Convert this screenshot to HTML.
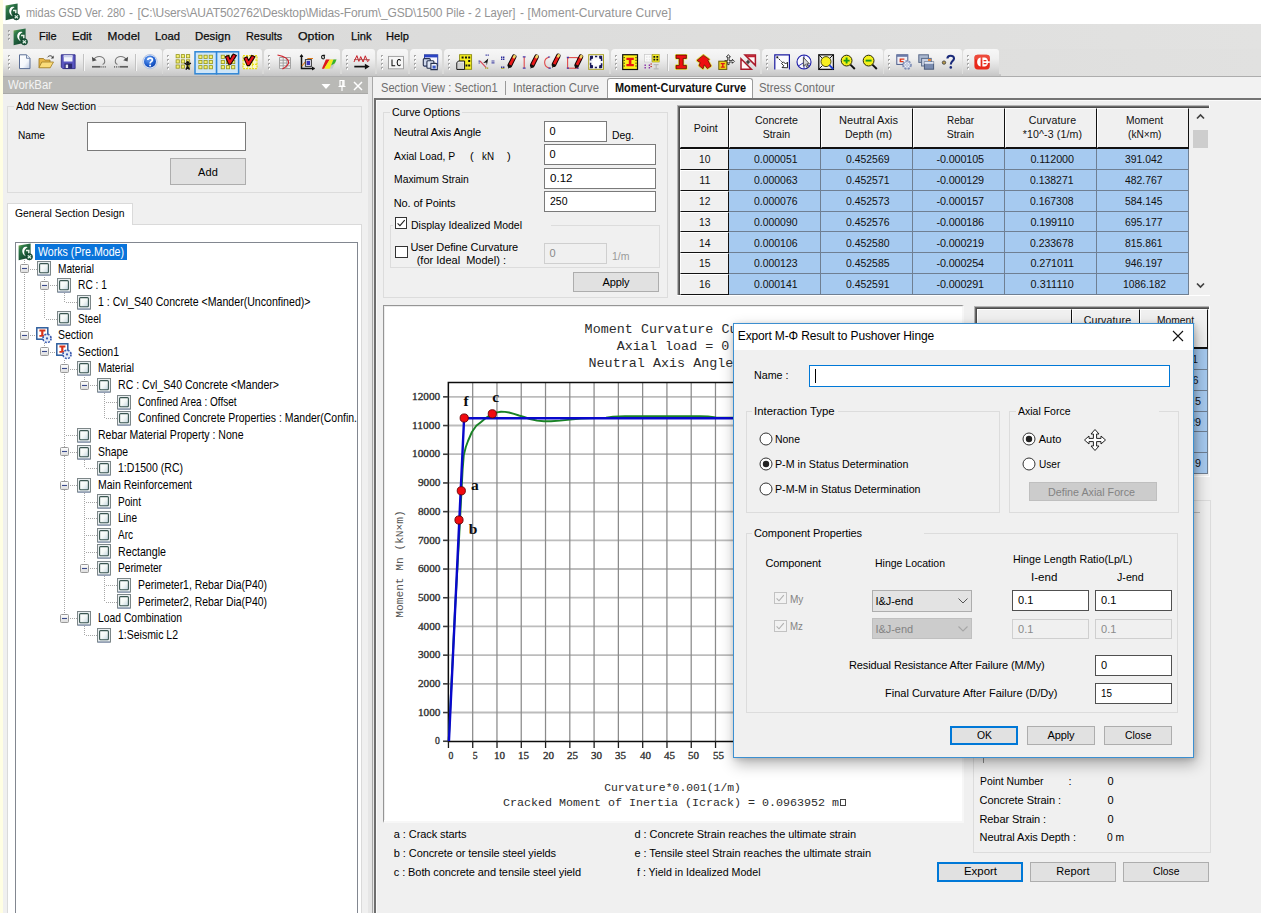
<!DOCTYPE html>
<html><head><meta charset="utf-8"><title>midas GSD</title>
<style>
html,body{margin:0;padding:0}
body{width:1261px;height:913px;overflow:hidden;background:#f0f0f0;position:relative;font-family:"Liberation Sans",sans-serif;}
div,span,svg{position:absolute;box-sizing:border-box}
span{white-space:pre;line-height:1;transform-origin:0 50%}
</style></head>
<body>
<div style="left:0px;top:0px;width:3px;height:913px;background:#fffee3;"></div>
<div style="left:3px;top:0px;width:1258px;height:24px;background:#ffffff;"></div>
<div style="left:3px;top:24px;width:1258px;height:25px;background:linear-gradient(90deg,#d9d9d8 0%,#dddddc 45%,#e2e2e1 100%);"></div>
<div style="left:3px;top:49px;width:1258px;height:28px;background:linear-gradient(90deg,#d6d6d5 0%,#dbdbda 45%,#e1e1e0 100%);"></div>
<div style="left:3px;top:74px;width:998px;height:2px;background:linear-gradient(#cbcbcb,#c2c2c2);"></div>
<div style="left:3px;top:76px;width:1258px;height:1px;background:#adadad;"></div>
<span style="left:26.20px;top:6.52px;font-size:12px;color:#949494;transform:scaleX(0.9123);">midas GSD Ver. 280</span>
<span style="left:128.90px;top:6.52px;font-size:12px;color:#949494;">-</span>
<span style="left:137.50px;top:6.52px;font-size:12px;color:#949494;letter-spacing:-0.140px;">[C:\Users\AUAT502762\Desktop\Midas-Forum\_GSD\1500</span>
<span style="left:446.00px;top:6.52px;font-size:12px;color:#949494;transform:scaleX(0.9372);">Pile - 2 Layer]</span>
<span style="left:520.00px;top:6.52px;font-size:12px;color:#949494;">-</span>
<span style="left:527.60px;top:6.52px;font-size:12px;color:#949494;letter-spacing:0.073px;">[Moment-Curvature Curve]</span>
<svg width="0" height="0" style="left:0;top:0"><defs><linearGradient id="gapp" x1="0" y1="0" x2=".7" y2="1"><stop offset="0" stop-color="#86b84e"/><stop offset=".28" stop-color="#2f7a4a"/><stop offset="1" stop-color="#0f3f2a"/></linearGradient></defs></svg>
<svg style="left:5px;top:2.6px;" width="15" height="18" viewBox="0 0 15 18"><path d="M.6 2.6 L12.6 .4 L12.6 14.6 L.6 17.2Z" fill="url(#gapp)"/>
<path d="M9.6 4.2C4.2 1.8 1.6 10.6 8 13.4C5.2 10.6 5.6 6 9.6 4.2Z" fill="#fff"/>
<path d="M8 7.4H10.8V10.4" fill="none" stroke="#e6efe6" stroke-width="1.5"/>
<circle cx="11.4" cy="13.8" r="3.1" fill="#1d5c3e" stroke="#0c3a25" stroke-width=".7"/>
<path d="M9.8 12.4L13 15.2M13 12.4L9.8 15.2" stroke="#e4f0e6" stroke-width="1.2"/></svg>
<div style="left:8px;top:30px;width:2px;height:11px;background:repeating-linear-gradient(#a2a2a2 0 2px,transparent 2px 4px)"></div><div style="left:9px;top:31px;width:1px;height:11px;background:repeating-linear-gradient(#f0f0f0 0 2px,transparent 2px 4px)"></div>
<svg style="left:13.4px;top:27.6px;" width="15" height="18" viewBox="0 0 15 18"><path d="M.6 2.6 L12.6 .4 L12.6 14.6 L.6 17.2Z" fill="url(#gapp)"/>
<path d="M9.6 4.2C4.2 1.8 1.6 10.6 8 13.4C5.2 10.6 5.6 6 9.6 4.2Z" fill="#fff"/>
<path d="M8 7.4H10.8V10.4" fill="none" stroke="#e6efe6" stroke-width="1.5"/>
<circle cx="11.4" cy="13.8" r="3.1" fill="#1d5c3e" stroke="#0c3a25" stroke-width=".7"/>
<path d="M9.8 12.4L13 15.2M13 12.4L9.8 15.2" stroke="#e4f0e6" stroke-width="1.2"/></svg>
<span style="left:39.20px;top:31.22px;font-size:11.8px;color:#111;transform:scaleX(0.9256);-webkit-text-stroke:0.25px #000;">File</span>
<span style="left:72.20px;top:31.22px;font-size:11.8px;color:#111;transform:scaleX(0.9740);-webkit-text-stroke:0.25px #000;">Edit</span>
<span style="left:107.50px;top:31.22px;font-size:11.8px;color:#111;letter-spacing:0.072px;-webkit-text-stroke:0.25px #000;">Model</span>
<span style="left:155.00px;top:31.22px;font-size:11.8px;color:#111;transform:scaleX(0.9524);-webkit-text-stroke:0.25px #000;">Load</span>
<span style="left:195.30px;top:31.22px;font-size:11.8px;color:#111;transform:scaleX(0.9664);-webkit-text-stroke:0.25px #000;">Design</span>
<span style="left:246.30px;top:31.22px;font-size:11.8px;color:#111;transform:scaleX(0.9201);-webkit-text-stroke:0.25px #000;">Results</span>
<span style="left:298.30px;top:31.22px;font-size:11.8px;color:#111;transform:scaleX(1.0470);-webkit-text-stroke:0.25px #000;">Option</span>
<span style="left:350.50px;top:31.22px;font-size:11.8px;color:#111;transform:scaleX(0.9466);-webkit-text-stroke:0.25px #000;">Link</span>
<span style="left:386.40px;top:31.22px;font-size:11.8px;color:#111;transform:scaleX(0.9437);-webkit-text-stroke:0.25px #000;">Help</span>
<div style="left:3px;top:49px;width:159px;height:27px;background:linear-gradient(#f7f7f7 0%,#f0f0f0 35%,#dadada 72%,#c6c6c6 100%);border-radius:0 3px 0 0;"></div>
<div style="left:8px;top:55px;width:2px;height:15px;background:repeating-linear-gradient(#a9a9a9 0 2px,transparent 2px 4px)"></div>
<div style="left:9px;top:56px;width:1px;height:15px;background:repeating-linear-gradient(#fff 0 2px,transparent 2px 4px)"></div>
<div style="left:163px;top:49px;width:99px;height:27px;background:linear-gradient(#f7f7f7 0%,#f0f0f0 35%,#dadada 72%,#c6c6c6 100%);border-radius:4px 3px 0 0;"></div>
<div style="left:167px;top:55px;width:2px;height:15px;background:repeating-linear-gradient(#a9a9a9 0 2px,transparent 2px 4px)"></div>
<div style="left:168px;top:56px;width:1px;height:15px;background:repeating-linear-gradient(#fff 0 2px,transparent 2px 4px)"></div>
<div style="left:264px;top:49px;width:76px;height:27px;background:linear-gradient(#f7f7f7 0%,#f0f0f0 35%,#dadada 72%,#c6c6c6 100%);border-radius:4px 3px 0 0;"></div>
<div style="left:268px;top:55px;width:2px;height:15px;background:repeating-linear-gradient(#a9a9a9 0 2px,transparent 2px 4px)"></div>
<div style="left:269px;top:56px;width:1px;height:15px;background:repeating-linear-gradient(#fff 0 2px,transparent 2px 4px)"></div>
<div style="left:342px;top:49px;width:33px;height:27px;background:linear-gradient(#f7f7f7 0%,#f0f0f0 35%,#dadada 72%,#c6c6c6 100%);border-radius:4px 3px 0 0;"></div>
<div style="left:346px;top:55px;width:2px;height:15px;background:repeating-linear-gradient(#a9a9a9 0 2px,transparent 2px 4px)"></div>
<div style="left:347px;top:56px;width:1px;height:15px;background:repeating-linear-gradient(#fff 0 2px,transparent 2px 4px)"></div>
<div style="left:377px;top:49px;width:31px;height:27px;background:linear-gradient(#f7f7f7 0%,#f0f0f0 35%,#dadada 72%,#c6c6c6 100%);border-radius:4px 3px 0 0;"></div>
<div style="left:381px;top:55px;width:2px;height:15px;background:repeating-linear-gradient(#a9a9a9 0 2px,transparent 2px 4px)"></div>
<div style="left:382px;top:56px;width:1px;height:15px;background:repeating-linear-gradient(#fff 0 2px,transparent 2px 4px)"></div>
<div style="left:410px;top:49px;width:32px;height:27px;background:linear-gradient(#f7f7f7 0%,#f0f0f0 35%,#dadada 72%,#c6c6c6 100%);border-radius:4px 3px 0 0;"></div>
<div style="left:414px;top:55px;width:2px;height:15px;background:repeating-linear-gradient(#a9a9a9 0 2px,transparent 2px 4px)"></div>
<div style="left:415px;top:56px;width:1px;height:15px;background:repeating-linear-gradient(#fff 0 2px,transparent 2px 4px)"></div>
<div style="left:444px;top:49px;width:165px;height:27px;background:linear-gradient(#f7f7f7 0%,#f0f0f0 35%,#dadada 72%,#c6c6c6 100%);border-radius:4px 3px 0 0;"></div>
<div style="left:448px;top:55px;width:2px;height:15px;background:repeating-linear-gradient(#a9a9a9 0 2px,transparent 2px 4px)"></div>
<div style="left:449px;top:56px;width:1px;height:15px;background:repeating-linear-gradient(#fff 0 2px,transparent 2px 4px)"></div>
<div style="left:611px;top:49px;width:149px;height:27px;background:linear-gradient(#f7f7f7 0%,#f0f0f0 35%,#dadada 72%,#c6c6c6 100%);border-radius:4px 3px 0 0;"></div>
<div style="left:615px;top:55px;width:2px;height:15px;background:repeating-linear-gradient(#a9a9a9 0 2px,transparent 2px 4px)"></div>
<div style="left:616px;top:56px;width:1px;height:15px;background:repeating-linear-gradient(#fff 0 2px,transparent 2px 4px)"></div>
<div style="left:762px;top:49px;width:121px;height:27px;background:linear-gradient(#f7f7f7 0%,#f0f0f0 35%,#dadada 72%,#c6c6c6 100%);border-radius:4px 3px 0 0;"></div>
<div style="left:766px;top:55px;width:2px;height:15px;background:repeating-linear-gradient(#a9a9a9 0 2px,transparent 2px 4px)"></div>
<div style="left:767px;top:56px;width:1px;height:15px;background:repeating-linear-gradient(#fff 0 2px,transparent 2px 4px)"></div>
<div style="left:884px;top:49px;width:78px;height:27px;background:linear-gradient(#f7f7f7 0%,#f0f0f0 35%,#dadada 72%,#c6c6c6 100%);border-radius:4px 3px 0 0;"></div>
<div style="left:888px;top:55px;width:2px;height:15px;background:repeating-linear-gradient(#a9a9a9 0 2px,transparent 2px 4px)"></div>
<div style="left:889px;top:56px;width:1px;height:15px;background:repeating-linear-gradient(#fff 0 2px,transparent 2px 4px)"></div>
<div style="left:963px;top:49px;width:36px;height:27px;background:linear-gradient(#f7f7f7 0%,#f0f0f0 35%,#dadada 72%,#c6c6c6 100%);border-radius:4px 3px 0 0;"></div>
<div style="left:967px;top:55px;width:2px;height:15px;background:repeating-linear-gradient(#a9a9a9 0 2px,transparent 2px 4px)"></div>
<div style="left:968px;top:56px;width:1px;height:15px;background:repeating-linear-gradient(#fff 0 2px,transparent 2px 4px)"></div>
<div style="left:83px;top:54px;width:1px;height:17px;background:#c2c2c2;"></div>
<div style="left:84px;top:54px;width:1px;height:17px;background:#f6f6f6;"></div>
<div style="left:135px;top:54px;width:1px;height:17px;background:#c2c2c2;"></div>
<div style="left:136px;top:54px;width:1px;height:17px;background:#f6f6f6;"></div>
<div style="left:667px;top:54px;width:1px;height:17px;background:#c2c2c2;"></div>
<div style="left:668px;top:54px;width:1px;height:17px;background:#f6f6f6;"></div>
<svg style="left:193px;top:50px;" width="48" height="26" viewBox="0 0 48 26"><rect x="2" y="1.8" width="21.6" height="22" fill="#cfe6f8" stroke="#2f86d6" stroke-width="1.5"/><rect x="23.6" y="1.8" width="22" height="22" fill="#cfe6f8" stroke="#2f86d6" stroke-width="1.5"/></svg>
<div style="left:3px;top:77px;width:365px;height:17px;background:#b9b9b6;"></div>
<div style="left:3px;top:93px;width:365px;height:1px;background:#a9a9a7;"></div>
<span style="left:8.00px;top:79.38px;font-size:12.5px;color:#f4f4f4;transform:scaleX(0.9093);">WorkBar</span>
<svg style="left:320px;top:80px;" width="12" height="12" viewBox="0 0 12 12"><path d="M1.5 4 H10.5 L6 9Z" fill="#fff"/></svg>
<svg style="left:336px;top:79px;" width="12" height="13" viewBox="0 0 12 13"><path d="M4 1.5H8V7H4Z M2.5 7.5H9.5 M6 7.5V12" fill="none" stroke="#fff" stroke-width="1.2"/><path d="M7 1.5V7" stroke="#fff" stroke-width="1.6"/></svg>
<svg style="left:352px;top:80px;" width="12" height="12" viewBox="0 0 12 12"><path d="M2 2L10 10M10 2L2 10" stroke="#fff" stroke-width="1.5"/></svg>
<div style="left:368px;top:77px;width:5px;height:836px;background:#e6e6e6;"></div>
<svg style="left:0;top:0" width="1000" height="78" viewBox="0 0 1000 78"><g transform="translate(17,54)"><defs><linearGradient id="gn" x1="0" y1="0" x2="1" y2="1"><stop offset="0" stop-color="#fff"/><stop offset=".6" stop-color="#f4f7fc"/><stop offset="1" stop-color="#b9c6de"/></linearGradient></defs>
<path d="M2.5 .8H9.5L13 4.3V14.6H2.5Z" fill="url(#gn)" stroke="#5a6e96" stroke-width="1"/><path d="M9.5 .8V4.3H13" fill="#e8eef8" stroke="#5a6e96" stroke-width=".8"/></g><g transform="translate(38,54)"><path d="M1 4.5H5.5L6.8 6H12V13.5H1Z" fill="#e9b84a" stroke="#9a7420" stroke-width=".8"/>
<path d="M3.8 8H15.5L12.2 13.8H.9Z" fill="#fbdc7a" stroke="#a07c24" stroke-width=".8"/>
<path d="M9.5 3.3C11 1.2 13.6 1.3 14.8 3.4" fill="none" stroke="#3d3d3d" stroke-width="1"/><path d="M15.6 1.6V4.6H12.8Z" fill="#3d3d3d"/></g><g transform="translate(60.5,54)"><path d="M.8 .8H14.6V14.6H2.3L.8 13.1Z" fill="#5a56c0" stroke="#2e2a86" stroke-width=".9"/>
<rect x="3.2" y="1.3" width="8.8" height="6.2" fill="#f2f4fb"/><rect x="3.2" y="1.3" width="8.8" height="2" fill="#c9cfea"/>
<rect x="4" y="9.6" width="7.6" height="5" fill="#2a2870"/><rect x="5.2" y="10.6" width="2.4" height="3.4" fill="#e6e8f4"/></g><g transform="translate(91,54)"><path d="M2.6 5.8C5 1.2 11.8 1.4 13.4 5.6C14.4 8.6 12.6 10 11.6 10.4" fill="none" stroke="#787878" stroke-width="1.05"/>
<path d="M.9 2.8L1.4 7.6L5.8 6.2Z" fill="#4f4f4f"/><path d="M1 12.8H9.5" stroke="#5f5f5f" stroke-width="1.7"/><path d="M10.4 12.8H15" stroke="#777" stroke-width="1.7" stroke-dasharray="1 .9"/></g><g transform="translate(113,54)"><path d="M13.4 5.8C11 1.2 4.2 1.4 2.6 5.6C1.6 8.6 3.4 10 4.4 10.4" fill="none" stroke="#787878" stroke-width="1.05"/>
<path d="M15.1 2.8L14.6 7.6L10.2 6.2Z" fill="#4f4f4f"/><path d="M6.5 12.8H15" stroke="#5f5f5f" stroke-width="1.7"/><path d="M1 12.8H5.6" stroke="#777" stroke-width="1.7" stroke-dasharray="1 .9"/></g><g transform="translate(142,54)"><defs><radialGradient id="gh" cx=".4" cy=".3" r=".8"><stop offset="0" stop-color="#6fa4f2"/><stop offset=".6" stop-color="#1f5fd0"/><stop offset="1" stop-color="#0c3a9c"/></radialGradient></defs>
<circle cx="8" cy="7.6" r="7.2" fill="#dfe8f8" stroke="#9ab0d8" stroke-width=".6"/><circle cx="8" cy="7.6" r="6" fill="url(#gh)"/>
<path d="M5.8 6C5.8 3.4 10.4 3.4 10.4 6C10.4 7.6 8.1 7.6 8.1 9.4" fill="none" stroke="#fff" stroke-width="1.7"/><circle cx="8.1" cy="11.6" r="1" fill="#fff"/></g><g transform="translate(175.5,54)"><rect x="0.6" y="0.6" width="3.2" height="3.2" fill="#f5f070" stroke="#96961c" stroke-width=".8"/><rect x="5.8" y="0.6" width="3.2" height="3.2" fill="#f5f070" stroke="#96961c" stroke-width=".8"/><rect x="11.0" y="0.6" width="3.2" height="3.2" fill="#f5f070" stroke="#96961c" stroke-width=".8"/><rect x="0.6" y="5.8" width="3.2" height="3.2" fill="#f5f070" stroke="#96961c" stroke-width=".8"/><rect x="5.8" y="5.8" width="3.2" height="3.2" fill="#f5f070" stroke="#96961c" stroke-width=".8"/><rect x="11.0" y="5.8" width="3.2" height="3.2" fill="#f5f070" stroke="#96961c" stroke-width=".8"/><rect x="0.6" y="11.0" width="3.2" height="3.2" fill="#f5f070" stroke="#96961c" stroke-width=".8"/><rect x="5.8" y="11.0" width="3.2" height="3.2" fill="#f5f070" stroke="#96961c" stroke-width=".8"/><rect x="11.0" y="11.0" width="3.2" height="3.2" fill="#f5f070" stroke="#96961c" stroke-width=".8"/><circle cx="12.2" cy="8.6" r="1.5" fill="#111"/><path d="M9 9.2L12.2 11L15.4 9.2M12.2 10.4V13M10.4 15.6L12.2 12.6L14 15.6" fill="none" stroke="#111" stroke-width="1.5"/></g><g transform="translate(198.2,54.6)"><rect x="0.6" y="0.6" width="3.2" height="3.2" fill="#f5f070" stroke="#96961c" stroke-width=".8"/><rect x="5.8" y="0.6" width="3.2" height="3.2" fill="#f5f070" stroke="#96961c" stroke-width=".8"/><rect x="11.0" y="0.6" width="3.2" height="3.2" fill="#f5f070" stroke="#96961c" stroke-width=".8"/><rect x="0.6" y="5.8" width="3.2" height="3.2" fill="#f5f070" stroke="#96961c" stroke-width=".8"/><rect x="5.8" y="5.8" width="3.2" height="3.2" fill="#f5f070" stroke="#96961c" stroke-width=".8"/><rect x="11.0" y="5.8" width="3.2" height="3.2" fill="#f5f070" stroke="#96961c" stroke-width=".8"/><rect x="0.6" y="11.0" width="3.2" height="3.2" fill="#f5f070" stroke="#96961c" stroke-width=".8"/><rect x="5.8" y="11.0" width="3.2" height="3.2" fill="#f5f070" stroke="#96961c" stroke-width=".8"/><rect x="11.0" y="11.0" width="3.2" height="3.2" fill="#f5f070" stroke="#96961c" stroke-width=".8"/></g><g transform="translate(220.6,54.6)"><rect x="0.6" y="0.6" width="3.2" height="3.2" fill="#f5f070" stroke="#96961c" stroke-width=".8"/><rect x="5.8" y="0.6" width="3.2" height="3.2" fill="#f5f070" stroke="#96961c" stroke-width=".8"/><rect x="11.0" y="0.6" width="3.2" height="3.2" fill="#f5f070" stroke="#96961c" stroke-width=".8"/><rect x="0.6" y="5.8" width="3.2" height="3.2" fill="#f5f070" stroke="#96961c" stroke-width=".8"/><rect x="5.8" y="5.8" width="3.2" height="3.2" fill="#f5f070" stroke="#96961c" stroke-width=".8"/><rect x="11.0" y="5.8" width="3.2" height="3.2" fill="#f5f070" stroke="#96961c" stroke-width=".8"/><rect x="0.6" y="11.0" width="3.2" height="3.2" fill="#f5f070" stroke="#96961c" stroke-width=".8"/><rect x="5.8" y="11.0" width="3.2" height="3.2" fill="#f5f070" stroke="#96961c" stroke-width=".8"/><rect x="11.0" y="11.0" width="3.2" height="3.2" fill="#f5f070" stroke="#96961c" stroke-width=".8"/><g transform="translate(0,-1.4)"><path d="M4.8 3.6L7.8 2.2L9.4 6L12.6 .8L15.8 2.2L10.2 11L8 11Z" fill="#e8141c" stroke="#1a0000" stroke-width="1.1" stroke-linejoin="round"/></g></g><g transform="translate(242,54)"><rect x="1" y="1.6" width="14" height="13" fill="#fbf8c8" stroke="#e4dc18" stroke-width="1.2" stroke-dasharray="2 1"/>
<path d="M1 6H15M1 10.4H15M5.6 1.6V14.6M10.4 1.6V14.6" stroke="#e8df18" stroke-width="1.1" stroke-dasharray="2 1"/><g transform="translate(-2.8,.6)"><path d="M4.8 3.6L7.8 2.2L9.4 6L12.6 .8L15.8 2.2L10.2 11L8 11Z" fill="#e8141c" stroke="#1a0000" stroke-width="1.1" stroke-linejoin="round"/></g></g><g transform="translate(276,54)"><path d="M3.5 3.5H14.5V14.5H3.5ZM3.5 6.2H14.5M3.5 9H14.5M3.5 11.8H14.5M7.2 3.5V14.5M10.8 3.5V14.5" fill="#f1f1f1" stroke="#9c9c9c" stroke-width=".9"/>
<path d="M1.5 1C7 2 12.4 4.6 12.6 8.4C12.6 11 9 13.4 6.4 15" fill="none" stroke="#d0202a" stroke-width="1.1"/></g><g transform="translate(299,54)"><path d="M2.5 1V14.5H15.5" fill="none" stroke="#111" stroke-width="1.5"/><path d="M2.5 0L.6 3H4.4Z M16 14.5L13 12.6V16.4Z" fill="#111"/>
<path d="M3 12L9 4.5H14" fill="none" stroke="#e07a18" stroke-width="1.1"/><rect x="6.4" y="5.6" width="6" height="6.8" fill="#e4e4f4" stroke="#3a3a3a" stroke-width="1"/><rect x="7.6" y="7" width="3.4" height="4" fill="#3a34b8"/></g><g transform="translate(320.5,54)"><path d="M5.4 5.4H16L12 14.8H1.4Z" fill="#c8c8c8"/><path d="M5.4 5.4H9.2L3.6 14.8H1.4Z" fill="#e01818"/><path d="M9.2 5.4H13L9.2 14.8H3.6Z" fill="#f4ec1c"/><path d="M13 5.4H16L14.4 9.2L10.6 11.6Z" fill="#38b428"/>
<path d="M4.6 1.2H2.6C.6 1.2 .6 5 2.6 5C4.4 5 4.4 1.6 2.6 1.4" fill="none" stroke="#111" stroke-width="1.1"/></g><g transform="translate(353.5,54)"><path d="M.5 8L3.4 1.6L5.4 7.4L7.2 2.6L9.6 8L11.8 1.8L14 7.6L16 6" fill="none" stroke="#c81e28" stroke-width="1"/><path d="M.5 5.6H16" stroke="#b04848" stroke-width=".9"/>
<path d="M.8 12.6H12" stroke="#111" stroke-width="1.7"/><path d="M16.2 12.6L11.4 9.8V15.4Z" fill="#111"/></g><g transform="translate(388,54)"><rect x=".5" y="2.4" width="15" height="12.4" fill="#f6f6f6" stroke="#9a9a9a" stroke-width=".9"/>
<path d="M4 5.4V11.8H7.2M12.6 6.6C11.8 4.8 9.2 5 9.2 8.6C9.2 12.2 11.8 12.4 12.6 10.6" fill="none" stroke="#111" stroke-width="1.05"/></g><g transform="translate(422.5,54)"><rect x="2" y=".8" width="13.2" height="11.2" fill="#f8f8ff" stroke="#2a3c9a" stroke-width="1"/><rect x="2" y=".8" width="13.2" height="2.6" fill="#2c44c4"/>
<rect x=".8" y="4.6" width="7" height="7.4" rx="1" fill="#cfd8ec" stroke="#26304e" stroke-width="1.1"/>
<rect x="4.4" y="6.8" width="7" height="7.4" rx="1" fill="#dfe6f4" stroke="#26304e" stroke-width="1.1"/>
<path d="M8.4 9.4H13.4C14.6 9.4 14.8 10.2 14.8 11V15.6H8.4Z" fill="#eef2fa" stroke="#26304e" stroke-width="1.1"/><rect x="10" y="11.6" width="3.2" height="3" fill="#3a58c8"/></g><g transform="translate(456,54)"><rect x="3.6" y=".7" width="12" height="14.6" fill="#f6ee20" stroke="#8a8a10" stroke-width=".9"/>
<path d="M5.6 2.6H7.6V4.6H5.6ZM9 2.6H11V4.6H9ZM12.2 2.6H14.2V4.6H12.2ZM12.2 6H14.2V8H12.2ZM12.2 10.6H14.2V12.6H12.2ZM9.6 10.6H11.4V12.6H9.6Z" fill="#111"/>
<path d="M.8 8.8L2.4 7H8.6V15.4H.8Z" fill="#e6e6e6" stroke="#111" stroke-width="1"/><path d="M2 10H7.4M2 12H7.4M2 14H7.4" stroke="#a8a8a8" stroke-width=".7"/></g><g transform="translate(478,54)"><path d="M2 7L8.2 13.6" stroke="#d84a5a" stroke-width="1.1"/><path d="M10.2 4.4L5.2 9L8.4 8.6L8.8 11.6Z" fill="#111"/>
<path d="M7.6 .6H8.8V1.8H7.6ZM9.6 .6H10.8V1.8H9.6ZM.6 6.6H1.8V7.8H.6ZM.6 8.4H1.8V9.6H.6ZM13.6 6.4H14.8V7.6H13.6ZM15.2 6.4H16.4V7.6H15.2ZM13.6 8.2H14.8V9.4H13.6ZM15.2 8.2H16.4V9.4H15.2Z" fill="#2a2a9a"/>
<path d="M7.2 13.6H8.4V14.8H7.2ZM9 13.6H10.2V14.8H9Z" fill="#a8a010"/></g><g transform="translate(500,54)"><path d="M1 2.6H2.4V4H1ZM3 2.6H4.4V4H3ZM1 4.6H2.4V6H1ZM3 4.6H4.4V6H3ZM1 12.6H2.4V14H1ZM3 12.6H4.4V14H3Z" fill="#2a2a9a"/><path d="M1 14.4H4.4" stroke="#a8a010" stroke-width=".8"/><g transform="translate(3,0)"><g transform="translate(.9,1.3) scale(.9)"><path d="M11.4 1.6L6.6 11.2" stroke="#140000" stroke-width="5.2" stroke-linecap="round"/><path d="M4.6 15L5.2 9.6L9 11.6Z" fill="#111"/><path d="M11.2 2L6.9 10.6" stroke="#e81a1a" stroke-width="3.1" stroke-linecap="butt"/><path d="M11.9 .9L11.3 2.1" stroke="#f2d468" stroke-width="3" stroke-linecap="round"/></g></g></g><g transform="translate(522,54)"><path d="M2.2 3V14" stroke="#e04a4a" stroke-width="1.1"/><path d="M.8 2.2H3.6V3.4H.8ZM.8 13.6H3.6V14.8H.8Z" fill="#4a3aa8"/><g transform="translate(3.4,0)"><g transform="translate(.9,1.3) scale(.9)"><path d="M11.4 1.6L6.6 11.2" stroke="#140000" stroke-width="5.2" stroke-linecap="round"/><path d="M4.6 15L5.2 9.6L9 11.6Z" fill="#111"/><path d="M11.2 2L6.9 10.6" stroke="#e81a1a" stroke-width="3.1" stroke-linecap="butt"/><path d="M11.9 .9L11.3 2.1" stroke="#f2d468" stroke-width="3" stroke-linecap="round"/></g></g></g><g transform="translate(543.5,54)"><path d="M5.6 3.2C-.6 4.6 -.4 13 6.4 14.2" fill="none" stroke="#e04a4a" stroke-width="1.1"/><path d="M4.4 2.4H6.6V3.6H4.4ZM5 13.6H7.4V14.8H5Z" fill="#4a3aa8"/><g transform="translate(3.6,-.8)"><g transform="translate(.9,1.3) scale(.9)"><path d="M11.4 1.6L6.6 11.2" stroke="#140000" stroke-width="5.2" stroke-linecap="round"/><path d="M4.6 15L5.2 9.6L9 11.6Z" fill="#111"/><path d="M11.2 2L6.9 10.6" stroke="#e81a1a" stroke-width="3.1" stroke-linecap="butt"/><path d="M11.9 .9L11.3 2.1" stroke="#f2d468" stroke-width="3" stroke-linecap="round"/></g></g></g><g transform="translate(566,54)"><rect x="1.6" y="3.6" width="10" height="10.6" fill="none" stroke="#e04a4a" stroke-width="1.1"/><path d="M.8 2.8H3V4.2H.8ZM.8 13.4H3V14.8H.8ZM10.6 13.4H12.8V14.8H10.6Z" fill="#4a3aa8"/><g transform="translate(3.8,0)"><g transform="translate(.9,1.3) scale(.9)"><path d="M11.4 1.6L6.6 11.2" stroke="#140000" stroke-width="5.2" stroke-linecap="round"/><path d="M4.6 15L5.2 9.6L9 11.6Z" fill="#111"/><path d="M11.2 2L6.9 10.6" stroke="#e81a1a" stroke-width="3.1" stroke-linecap="butt"/><path d="M11.9 .9L11.3 2.1" stroke="#f2d468" stroke-width="3" stroke-linecap="round"/></g></g></g><g transform="translate(588,54)"><rect x=".7" y=".7" width="14.8" height="14.6" fill="#f4f4fa" stroke="#a8a020" stroke-width="1"/>
<rect x="2.6" y="2.6" width="11" height="10.8" fill="none" stroke="#1a1a5a" stroke-width="1.5" stroke-dasharray="2.2 2.2"/><rect x="2" y="2" width="3" height="3" fill="#1a1a5a"/><rect x="11.2" y="2" width="3" height="3" fill="#1a1a5a"/><rect x="2" y="11" width="3" height="3" fill="#1a1a5a"/><rect x="11.2" y="11" width="3" height="3" fill="#1a1a5a"/>
<rect x="4.6" y="4.4" width="7" height="7" fill="#fff"/></g><g transform="translate(622,54)"><rect x=".7" y=".7" width="14.8" height="14.8" fill="#faf21a" stroke="#111" stroke-width="1.2"/>
<path d="M4.4 3.8H11.8V6H9.4V10H11.8V12.2H4.4V10H6.8V6H4.4Z" fill="#e81414"/>
<path d="M2.2 3V13.4M14 3V13.4" stroke="#111" stroke-width=".9" stroke-dasharray="1.2 1.6"/></g><g transform="translate(644,54)"><rect x=".6" y=".6" width="7" height="7.4" fill="#fafafa" stroke="#c8c8c8" stroke-width=".7"/><rect x="8.2" y=".6" width="7" height="7.4" fill="#f6ee20" stroke="#a8a020" stroke-width=".7"/>
<path d="M2 2.2H3.6V3.8H2ZM4.8 2.2H6.4V3.8H4.8ZM2 5H3.6V6.6H2ZM4.8 5H6.4V6.6H4.8Z" fill="#e8e8e8"/><path d="M9.4 2H11.2V3.8H9.4ZM12.4 2H14.2V3.8H12.4ZM9.4 4.8H11.2V6.6H9.4ZM12.4 4.8H14.2V6.6H12.4Z" fill="#111"/>
<path d="M1.2 10.4V15M5.4 10.4V15" stroke="#8a30a8" stroke-width="1.4" stroke-dasharray="1.6 1"/><path d="M6.4 10H8M6.4 12.6H8" stroke="#c03030" stroke-width="1"/><path d="M9.6 10.6H14.6M12.2 10.6V14.6M9.6 14.8H14.6" stroke="#b8b8b8" stroke-width="1.2"/></g><g transform="translate(674,54)"><path d="M2 1H12.4V4.4H9.2V11.4H12.4V14.8H2V11.4H5.2V4.4H2Z" fill="#ee1010" stroke="#f4ea50" stroke-width="2.2" stroke-linejoin="round"/><path d="M2 1H12.4V4.4H9.2V11.4H12.4V14.8H2V11.4H5.2V4.4H2Z" fill="#ee1010" stroke="#3a0000" stroke-width=".7"/></g><g transform="translate(696,54)"><path d="M7.4 1.2L13.2 5.4L12 6.6L15 12L11.4 14.6L8.4 10.8L7 14.8L3 11.6L4.2 8.6L1 6.4Z" fill="#ee1010" stroke="#ecd84a" stroke-width="2.4" stroke-linejoin="round"/><path d="M7.4 1.2L13.2 5.4L12 6.6L15 12L11.4 14.6L8.4 10.8L7 14.8L3 11.6L4.2 8.6L1 6.4Z" fill="#ee1010" stroke="#4a0a00" stroke-width=".7" stroke-linejoin="round"/></g><g transform="translate(718,54)"><path d="M10.4 .6L12.4 3H11.1V6.6H14.4V5.3L16.4 7.3L14.4 9.3V8H11.1V10.6H9.7V8H6.8V6.6H9.7V3H8.4Z" fill="#fff" stroke="#111" stroke-width=".8" stroke-linejoin="round"/>
<rect x=".8" y="7.2" width="8" height="8.2" fill="#f0d418" stroke="#6a5a08" stroke-width="1"/><path d="M2.8 9H6.8V10.3H5.5V12.4H6.8V13.7H2.8V12.4H4.1V10.3H2.8Z" fill="#d81a1a"/></g><g transform="translate(740,54)"><path d="M5 1H15.4V11.4Z" fill="#fff6f6" stroke="#a81828" stroke-width="1.5" stroke-linejoin="miter"/><path d="M5.6 1.2H15.2V3.2H8Z" fill="#c02030"/><path d="M1 4.8V15.2H11.4Z" fill="#fff6f6" stroke="#a81828" stroke-width="1.5"/>
<path d="M5.8 8H10.2M8 5.8V10.2" stroke="#111" stroke-width="1.1"/></g><g transform="translate(774,54)"><path d="M.8 15.4V.8H15.4V15.4" fill="#fbfbff" stroke="#1a1aa0" stroke-width="1.2"/>
<path d="M3.2 3.2L9 9" stroke="#111" stroke-width="1" stroke-dasharray="1.4 1"/><path d="M13.6 13.8L13.4 8.2L11.6 10L9.4 7.8L7.6 9.6L9.8 11.8L8 13.6Z" fill="#fff" stroke="#111" stroke-width=".9"/><rect x="2.4" y="2.4" width="1.8" height="1.8" fill="#111"/></g><g transform="translate(796,54)"><circle cx="8" cy="8" r="7" fill="#fafaff" stroke="#1c1ca8" stroke-width="1.1"/><path d="M8 1V15M2.4 12L8 8.4L13.6 12" fill="none" stroke="#1c1ca8" stroke-width=".9"/>
<path d="M7.4 3.4V12.2L9.4 10.4L11 13.8L12.4 13.2L10.8 9.8H13.4Z" fill="#d8d8d8" stroke="#333" stroke-width=".8"/></g><g transform="translate(818,54)"><rect x=".8" y=".8" width="14.6" height="14.6" fill="#f4f4f4" stroke="#111" stroke-width="1.3"/><path d="M1 1L5 5M15 1L11.4 4.6M1 15L4.6 11.4" stroke="#111" stroke-width="1"/>
<circle cx="8" cy="7.6" r="5" fill="#f8f020" stroke="#3a3a10" stroke-width=".9"/><path d="M11.4 11.2L15.2 15.2" stroke="#1a3ad0" stroke-width="1.8"/></g><g transform="translate(840,54)"><circle cx="6.6" cy="6.6" r="5.4" fill="#f4f01a" stroke="#2a2a08" stroke-width="1"/><path d="M10.4 10.6L14.8 15" stroke="#111" stroke-width="1.9"/><path d="M3.6 6.6H9.6M6.6 3.6V9.6" stroke="#1a9a1a" stroke-width="1.9"/></g><g transform="translate(862,54)"><circle cx="6.6" cy="6.6" r="5.4" fill="#f4f01a" stroke="#2a2a08" stroke-width="1"/><path d="M10.4 10.6L14.8 15" stroke="#111" stroke-width="1.9"/><path d="M3.6 6.6H9.6" stroke="#1a9a1a" stroke-width="1.9"/></g><g transform="translate(896,54)"><rect x=".8" y=".8" width="11" height="9.6" fill="#eef0f8" stroke="#4a5a8a" stroke-width="1"/><rect x=".8" y=".8" width="11" height="2" fill="#6a7aa8"/><path d="M3.6 4.4H8.4V5.8H5.2V7H7.6V8.2H3.6Z" fill="#e03a1a"/>
<circle cx="11" cy="11" r="3.7" fill="#dde4f2" stroke="#7a8ab4" stroke-width="2.2" stroke-dasharray="1.9 1.2"/><circle cx="11" cy="11" r="3.2" fill="#eef2fa" stroke="#8a9abf" stroke-width=".7"/><circle cx="11" cy="11" r="1.3" fill="#fff" stroke="#7a8ab4" stroke-width=".6"/></g><g transform="translate(918,54)"><rect x=".8" y=".8" width="9.6" height="7.6" fill="#aab8d0" stroke="#5a6a88" stroke-width="1"/><rect x="3.6" y="4.4" width="9.6" height="7.6" fill="#c8d2e4" stroke="#5a6a88" stroke-width="1"/><rect x="10" y="5" width="3" height="2" fill="#e88a3a"/>
<rect x="6.4" y="8" width="9.2" height="7.2" fill="#7a8cb0" stroke="#4a5a7a" stroke-width="1"/><rect x="6.4" y="8" width="9.2" height="1.8" fill="#dfe6f2"/></g><g transform="translate(941,54)"><path d="M6.4 4.6C6.4 .8 13 .8 13 4.4C13 7 9.8 7.2 9.8 10.4" fill="none" stroke="#1a2a7a" stroke-width="2.1"/><circle cx="9.8" cy="13.4" r="1.3" fill="#1a2a7a"/><circle cx="3" cy="8.6" r="1.7" fill="#b89a4a" stroke="#3a3a3a" stroke-width=".8"/></g><g transform="translate(974,54)"><rect x=".4" y=".8" width="15.4" height="14.6" rx="3.4" fill="#e8281a"/><rect x=".4" y=".8" width="15.4" height="5" rx="3" fill="#f0584a" opacity=".7"/>
<path d="M6.6 3.6C2 3.6 2 12.6 6.6 12.6Z" fill="#fff"/><path d="M8.4 3.6H11C15 3.6 15 12.6 11 12.6H8.4Z" fill="#fff"/><path d="M9.6 6.6H12.4M9.6 9.6H12.4" stroke="#e8281a" stroke-width="1.2"/><path d="M12.4 8.1H15.8" stroke="#fff" stroke-width="1.6"/></g></svg>
<div style="left:7px;top:106px;width:355px;height:87px;border:1px solid #dcdcdc;"></div>
<div style="left:14px;top:105px;width:84px;height:3px;background:#f0f0f0;"></div>
<span style="left:16.00px;top:100.91px;font-size:11px;color:#000;transform:scaleX(0.9480);">Add New Section</span>
<span style="left:18.00px;top:130.11px;font-size:11px;color:#000;transform:scaleX(0.9201);">Name</span>
<div style="left:87px;top:122px;width:159px;height:29.4px;background:#fff;border:1px solid #7a7a7a;"></div>
<div style="left:170px;top:158px;width:76px;height:27px;background:#e1e1e1;border:1px solid #adadad;"></div>
<span style="left:198.00px;top:166.61px;font-size:11px;color:#000;letter-spacing:0.141px;">Add</span>
<div style="left:7px;top:224px;width:355px;height:700px;background:#fff;border:1px solid #dadada;"></div>
<div style="left:7px;top:203.4px;width:126px;height:21.6px;background:#fff;border:1px solid #dadada;border-bottom:none;"></div>
<span style="left:15.00px;top:208.41px;font-size:11px;color:#000;transform:scaleX(0.9424);">General Section Design</span>
<div style="left:15px;top:242px;width:343px;height:700px;background:#fff;border:1px solid #828790;"></div>
<svg width="0" height="0" style="left:0;top:0"><defs><linearGradient id="gsq" x1="0" y1="0" x2="1" y2="1"><stop offset="0" stop-color="#fff"/><stop offset=".5" stop-color="#f4f8f6"/><stop offset="1" stop-color="#c2d4e0"/></linearGradient><linearGradient id="gex" x1="0" y1="0" x2="0" y2="1"><stop offset="0" stop-color="#fff"/><stop offset="1" stop-color="#dcdcdc"/></linearGradient></defs></svg>
<div style="left:24px;top:260.0px;width:1px;height:70.2px;background:repeating-linear-gradient(#a6a6a6 0 1px,transparent 1px 2px)"></div>
<div style="left:29.5px;top:269px;width:7.0px;height:1px;background:repeating-linear-gradient(90deg,#a6a6a6 0 1px,transparent 1px 2px)"></div>
<div style="left:44px;top:276.6px;width:1px;height:42.0px;background:repeating-linear-gradient(#a6a6a6 0 1px,transparent 1px 2px)"></div>
<div style="left:49.5px;top:285px;width:7.0px;height:1px;background:repeating-linear-gradient(90deg,#a6a6a6 0 1px,transparent 1px 2px)"></div>
<div style="left:64px;top:293.3px;width:1px;height:8.6px;background:repeating-linear-gradient(#a6a6a6 0 1px,transparent 1px 2px)"></div>
<div style="left:65.5px;top:302px;width:11.0px;height:1px;background:repeating-linear-gradient(90deg,#a6a6a6 0 1px,transparent 1px 2px)"></div>
<div style="left:45.5px;top:319px;width:11.0px;height:1px;background:repeating-linear-gradient(90deg,#a6a6a6 0 1px,transparent 1px 2px)"></div>
<div style="left:29.5px;top:335px;width:7.0px;height:1px;background:repeating-linear-gradient(90deg,#a6a6a6 0 1px,transparent 1px 2px)"></div>
<div style="left:44px;top:343.2px;width:1px;height:3.6px;background:repeating-linear-gradient(#a6a6a6 0 1px,transparent 1px 2px)"></div>
<div style="left:49.5px;top:352px;width:7.0px;height:1px;background:repeating-linear-gradient(90deg,#a6a6a6 0 1px,transparent 1px 2px)"></div>
<div style="left:64px;top:359.9px;width:1px;height:253.4px;background:repeating-linear-gradient(#a6a6a6 0 1px,transparent 1px 2px)"></div>
<div style="left:69.5px;top:369px;width:7.0px;height:1px;background:repeating-linear-gradient(90deg,#a6a6a6 0 1px,transparent 1px 2px)"></div>
<div style="left:84px;top:376.5px;width:1px;height:3.7px;background:repeating-linear-gradient(#a6a6a6 0 1px,transparent 1px 2px)"></div>
<div style="left:89.5px;top:385px;width:7.0px;height:1px;background:repeating-linear-gradient(90deg,#a6a6a6 0 1px,transparent 1px 2px)"></div>
<div style="left:104px;top:393.2px;width:1px;height:25.3px;background:repeating-linear-gradient(#a6a6a6 0 1px,transparent 1px 2px)"></div>
<div style="left:105.5px;top:402px;width:11.0px;height:1px;background:repeating-linear-gradient(90deg,#a6a6a6 0 1px,transparent 1px 2px)"></div>
<div style="left:105.5px;top:418px;width:11.0px;height:1px;background:repeating-linear-gradient(90deg,#a6a6a6 0 1px,transparent 1px 2px)"></div>
<div style="left:65.5px;top:435px;width:11.0px;height:1px;background:repeating-linear-gradient(90deg,#a6a6a6 0 1px,transparent 1px 2px)"></div>
<div style="left:69.5px;top:452px;width:7.0px;height:1px;background:repeating-linear-gradient(90deg,#a6a6a6 0 1px,transparent 1px 2px)"></div>
<div style="left:84px;top:459.8px;width:1px;height:8.7px;background:repeating-linear-gradient(#a6a6a6 0 1px,transparent 1px 2px)"></div>
<div style="left:85.5px;top:468px;width:11.0px;height:1px;background:repeating-linear-gradient(90deg,#a6a6a6 0 1px,transparent 1px 2px)"></div>
<div style="left:69.5px;top:485px;width:7.0px;height:1px;background:repeating-linear-gradient(90deg,#a6a6a6 0 1px,transparent 1px 2px)"></div>
<div style="left:84px;top:493.1px;width:1px;height:70.2px;background:repeating-linear-gradient(#a6a6a6 0 1px,transparent 1px 2px)"></div>
<div style="left:85.5px;top:502px;width:11.0px;height:1px;background:repeating-linear-gradient(90deg,#a6a6a6 0 1px,transparent 1px 2px)"></div>
<div style="left:85.5px;top:518px;width:11.0px;height:1px;background:repeating-linear-gradient(90deg,#a6a6a6 0 1px,transparent 1px 2px)"></div>
<div style="left:85.5px;top:535px;width:11.0px;height:1px;background:repeating-linear-gradient(90deg,#a6a6a6 0 1px,transparent 1px 2px)"></div>
<div style="left:85.5px;top:552px;width:11.0px;height:1px;background:repeating-linear-gradient(90deg,#a6a6a6 0 1px,transparent 1px 2px)"></div>
<div style="left:89.5px;top:568px;width:7.0px;height:1px;background:repeating-linear-gradient(90deg,#a6a6a6 0 1px,transparent 1px 2px)"></div>
<div style="left:104px;top:576.3px;width:1px;height:25.3px;background:repeating-linear-gradient(#a6a6a6 0 1px,transparent 1px 2px)"></div>
<div style="left:105.5px;top:585px;width:11.0px;height:1px;background:repeating-linear-gradient(90deg,#a6a6a6 0 1px,transparent 1px 2px)"></div>
<div style="left:105.5px;top:602px;width:11.0px;height:1px;background:repeating-linear-gradient(90deg,#a6a6a6 0 1px,transparent 1px 2px)"></div>
<div style="left:69.5px;top:618px;width:7.0px;height:1px;background:repeating-linear-gradient(90deg,#a6a6a6 0 1px,transparent 1px 2px)"></div>
<div style="left:84px;top:626.3px;width:1px;height:8.7px;background:repeating-linear-gradient(#a6a6a6 0 1px,transparent 1px 2px)"></div>
<div style="left:85.5px;top:635px;width:11.0px;height:1px;background:repeating-linear-gradient(90deg,#a6a6a6 0 1px,transparent 1px 2px)"></div>
<svg style="left:18px;top:242.5px;" width="15" height="18" viewBox="0 0 15 18"><path d="M.6 2.6 L12.6 .4 L12.6 14.6 L.6 17.2Z" fill="url(#gapp)"/>
<path d="M9.6 4.2C4.2 1.8 1.6 10.6 8 13.4C5.2 10.6 5.6 6 9.6 4.2Z" fill="#fff"/>
<path d="M8 7.4H10.8V10.4" fill="none" stroke="#e6efe6" stroke-width="1.5"/>
<circle cx="11.4" cy="13.8" r="3.1" fill="#1d5c3e" stroke="#0c3a25" stroke-width=".7"/>
<path d="M9.8 12.4L13 15.2M13 12.4L9.8 15.2" stroke="#e4f0e6" stroke-width="1.2"/></svg>
<div style="left:35px;top:243.5px;width:92px;height:16.5px;background:#0a74da;"></div>
<span style="left:38.00px;top:245.92px;font-size:12.4px;color:#fff;transform:scaleX(0.8575);">Works (Pre.Mode)</span>
<svg style="left:20px;top:264.15px;" width="9" height="9" viewBox="0 0 9 9"><rect x=".5" y=".5" width="8" height="8" rx="1" fill="url(#gex)" stroke="#999"/><path d="M2 4.5H7" stroke="#3a4a8c" stroke-width="1.1"/></svg>
<svg style="left:37px;top:261.34999999999997px;" width="14" height="15" viewBox="0 0 14 15"><rect x=".5" y=".5" width="13" height="13.6" fill="#e9eef0" stroke="#7c8688"/>
<path d="M1 14.1H13" stroke="#8494b4" stroke-width="1"/>
<rect x="2.6" y="2.6" width="8.8" height="9.2" rx="1" fill="url(#gsq)" stroke="#3a5650" stroke-width="1.1"/></svg>
<span style="left:58.00px;top:262.57px;font-size:12.4px;color:#000;transform:scaleX(0.8167);">Material</span>
<svg style="left:40px;top:280.8px;" width="9" height="9" viewBox="0 0 9 9"><rect x=".5" y=".5" width="8" height="8" rx="1" fill="url(#gex)" stroke="#999"/><path d="M2 4.5H7" stroke="#3a4a8c" stroke-width="1.1"/></svg>
<svg style="left:57px;top:278.0px;" width="14" height="15" viewBox="0 0 14 15"><rect x=".5" y=".5" width="13" height="13.6" fill="#e9eef0" stroke="#7c8688"/>
<path d="M1 14.1H13" stroke="#8494b4" stroke-width="1"/>
<rect x="2.6" y="2.6" width="8.8" height="9.2" rx="1" fill="url(#gsq)" stroke="#3a5650" stroke-width="1.1"/></svg>
<span style="left:78.00px;top:279.22px;font-size:12.4px;color:#000;transform:scaleX(0.8256);">RC : 1</span>
<svg style="left:77px;top:294.65px;" width="14" height="15" viewBox="0 0 14 15"><rect x=".5" y=".5" width="13" height="13.6" fill="#e9eef0" stroke="#7c8688"/>
<path d="M1 14.1H13" stroke="#8494b4" stroke-width="1"/>
<rect x="2.6" y="2.6" width="8.8" height="9.2" rx="1" fill="url(#gsq)" stroke="#3a5650" stroke-width="1.1"/></svg>
<span style="left:98.00px;top:295.87px;font-size:12.4px;color:#000;transform:scaleX(0.8546);">1 : Cvl_S40 Concrete &lt;Mander(Unconfined)&gt;</span>
<svg style="left:57px;top:311.3px;" width="14" height="15" viewBox="0 0 14 15"><rect x=".5" y=".5" width="13" height="13.6" fill="#e9eef0" stroke="#7c8688"/>
<path d="M1 14.1H13" stroke="#8494b4" stroke-width="1"/>
<rect x="2.6" y="2.6" width="8.8" height="9.2" rx="1" fill="url(#gsq)" stroke="#3a5650" stroke-width="1.1"/></svg>
<span style="left:78.00px;top:312.52px;font-size:12.4px;color:#000;transform:scaleX(0.8142);">Steel</span>
<svg style="left:20px;top:330.75px;" width="9" height="9" viewBox="0 0 9 9"><rect x=".5" y=".5" width="8" height="8" rx="1" fill="url(#gex)" stroke="#999"/><path d="M2 4.5H7" stroke="#3a4a8c" stroke-width="1.1"/></svg>
<svg style="left:36px;top:326.75px;" width="17" height="17" viewBox="0 0 17 17"><rect x=".8" y=".8" width="11" height="11.4" fill="#fff" stroke="#2c5c9c" stroke-width="1.5"/>
<path d="M3.4 2.6H9.4V4.4H7.4V8H9V9.8H3.4V8H5.2V4.4H3.4Z" fill="#d8341a"/>
<circle cx="11" cy="11.4" r="4" fill="#eaf0fa" stroke="#3c5cb0" stroke-width="1.7" stroke-dasharray="2 1.15"/>
<circle cx="11" cy="11.4" r="3.1" fill="#e4ebf7"/>
<circle cx="11" cy="11.4" r="1.1" fill="#3c5cb0"/></svg>
<span style="left:58.00px;top:329.17px;font-size:12.4px;color:#000;transform:scaleX(0.8466);">Section</span>
<svg style="left:40px;top:347.4px;" width="9" height="9" viewBox="0 0 9 9"><rect x=".5" y=".5" width="8" height="8" rx="1" fill="url(#gex)" stroke="#999"/><path d="M2 4.5H7" stroke="#3a4a8c" stroke-width="1.1"/></svg>
<svg style="left:56px;top:343.4px;" width="17" height="17" viewBox="0 0 17 17"><rect x=".8" y=".8" width="11" height="11.4" fill="#fff" stroke="#2c5c9c" stroke-width="1.5"/>
<path d="M3.4 2.6H9.4V4.4H7.4V8H9V9.8H3.4V8H5.2V4.4H3.4Z" fill="#d8341a"/>
<circle cx="11" cy="11.4" r="4" fill="#eaf0fa" stroke="#3c5cb0" stroke-width="1.7" stroke-dasharray="2 1.15"/>
<circle cx="11" cy="11.4" r="3.1" fill="#e4ebf7"/>
<circle cx="11" cy="11.4" r="1.1" fill="#3c5cb0"/></svg>
<span style="left:78.00px;top:345.82px;font-size:12.4px;color:#000;transform:scaleX(0.8500);">Section1</span>
<svg style="left:60px;top:364.04999999999995px;" width="9" height="9" viewBox="0 0 9 9"><rect x=".5" y=".5" width="8" height="8" rx="1" fill="url(#gex)" stroke="#999"/><path d="M2 4.5H7" stroke="#3a4a8c" stroke-width="1.1"/></svg>
<svg style="left:77px;top:361.24999999999994px;" width="14" height="15" viewBox="0 0 14 15"><rect x=".5" y=".5" width="13" height="13.6" fill="#e9eef0" stroke="#7c8688"/>
<path d="M1 14.1H13" stroke="#8494b4" stroke-width="1"/>
<rect x="2.6" y="2.6" width="8.8" height="9.2" rx="1" fill="url(#gsq)" stroke="#3a5650" stroke-width="1.1"/></svg>
<span style="left:98.00px;top:362.47px;font-size:12.4px;color:#000;transform:scaleX(0.8167);">Material</span>
<svg style="left:80px;top:380.7px;" width="9" height="9" viewBox="0 0 9 9"><rect x=".5" y=".5" width="8" height="8" rx="1" fill="url(#gex)" stroke="#999"/><path d="M2 4.5H7" stroke="#3a4a8c" stroke-width="1.1"/></svg>
<svg style="left:97px;top:377.9px;" width="14" height="15" viewBox="0 0 14 15"><rect x=".5" y=".5" width="13" height="13.6" fill="#e9eef0" stroke="#7c8688"/>
<path d="M1 14.1H13" stroke="#8494b4" stroke-width="1"/>
<rect x="2.6" y="2.6" width="8.8" height="9.2" rx="1" fill="url(#gsq)" stroke="#3a5650" stroke-width="1.1"/></svg>
<span style="left:118.00px;top:379.12px;font-size:12.4px;color:#000;transform:scaleX(0.8532);">RC : Cvl_S40 Concrete &lt;Mander&gt;</span>
<svg style="left:117px;top:394.55px;" width="14" height="15" viewBox="0 0 14 15"><rect x=".5" y=".5" width="13" height="13.6" fill="#e9eef0" stroke="#7c8688"/>
<path d="M1 14.1H13" stroke="#8494b4" stroke-width="1"/>
<rect x="2.6" y="2.6" width="8.8" height="9.2" rx="1" fill="url(#gsq)" stroke="#3a5650" stroke-width="1.1"/></svg>
<span style="left:138.00px;top:395.77px;font-size:12.4px;color:#000;transform:scaleX(0.8103);">Confined Area : Offset</span>
<svg style="left:117px;top:411.2px;" width="14" height="15" viewBox="0 0 14 15"><rect x=".5" y=".5" width="13" height="13.6" fill="#e9eef0" stroke="#7c8688"/>
<path d="M1 14.1H13" stroke="#8494b4" stroke-width="1"/>
<rect x="2.6" y="2.6" width="8.8" height="9.2" rx="1" fill="url(#gsq)" stroke="#3a5650" stroke-width="1.1"/></svg>
<span style="left:138.00px;top:412.42px;font-size:12.4px;color:#000;transform:scaleX(0.8457);">Confined Concrete Properties : Mander(Confin.</span>
<svg style="left:77px;top:427.84999999999997px;" width="14" height="15" viewBox="0 0 14 15"><rect x=".5" y=".5" width="13" height="13.6" fill="#e9eef0" stroke="#7c8688"/>
<path d="M1 14.1H13" stroke="#8494b4" stroke-width="1"/>
<rect x="2.6" y="2.6" width="8.8" height="9.2" rx="1" fill="url(#gsq)" stroke="#3a5650" stroke-width="1.1"/></svg>
<span style="left:98.00px;top:429.07px;font-size:12.4px;color:#000;transform:scaleX(0.8485);">Rebar Material Property : None</span>
<svg style="left:60px;top:447.29999999999995px;" width="9" height="9" viewBox="0 0 9 9"><rect x=".5" y=".5" width="8" height="8" rx="1" fill="url(#gex)" stroke="#999"/><path d="M2 4.5H7" stroke="#3a4a8c" stroke-width="1.1"/></svg>
<svg style="left:77px;top:444.49999999999994px;" width="14" height="15" viewBox="0 0 14 15"><rect x=".5" y=".5" width="13" height="13.6" fill="#e9eef0" stroke="#7c8688"/>
<path d="M1 14.1H13" stroke="#8494b4" stroke-width="1"/>
<rect x="2.6" y="2.6" width="8.8" height="9.2" rx="1" fill="url(#gsq)" stroke="#3a5650" stroke-width="1.1"/></svg>
<span style="left:98.00px;top:445.72px;font-size:12.4px;color:#000;transform:scaleX(0.8370);">Shape</span>
<svg style="left:97px;top:461.15px;" width="14" height="15" viewBox="0 0 14 15"><rect x=".5" y=".5" width="13" height="13.6" fill="#e9eef0" stroke="#7c8688"/>
<path d="M1 14.1H13" stroke="#8494b4" stroke-width="1"/>
<rect x="2.6" y="2.6" width="8.8" height="9.2" rx="1" fill="url(#gsq)" stroke="#3a5650" stroke-width="1.1"/></svg>
<span style="left:118.00px;top:462.37px;font-size:12.4px;color:#000;transform:scaleX(0.8504);">1:D1500 (RC)</span>
<svg style="left:60px;top:480.59999999999997px;" width="9" height="9" viewBox="0 0 9 9"><rect x=".5" y=".5" width="8" height="8" rx="1" fill="url(#gex)" stroke="#999"/><path d="M2 4.5H7" stroke="#3a4a8c" stroke-width="1.1"/></svg>
<svg style="left:77px;top:477.79999999999995px;" width="14" height="15" viewBox="0 0 14 15"><rect x=".5" y=".5" width="13" height="13.6" fill="#e9eef0" stroke="#7c8688"/>
<path d="M1 14.1H13" stroke="#8494b4" stroke-width="1"/>
<rect x="2.6" y="2.6" width="8.8" height="9.2" rx="1" fill="url(#gsq)" stroke="#3a5650" stroke-width="1.1"/></svg>
<span style="left:98.00px;top:479.02px;font-size:12.4px;color:#000;transform:scaleX(0.8478);">Main Reinforcement</span>
<svg style="left:97px;top:494.45px;" width="14" height="15" viewBox="0 0 14 15"><rect x=".5" y=".5" width="13" height="13.6" fill="#e9eef0" stroke="#7c8688"/>
<path d="M1 14.1H13" stroke="#8494b4" stroke-width="1"/>
<rect x="2.6" y="2.6" width="8.8" height="9.2" rx="1" fill="url(#gsq)" stroke="#3a5650" stroke-width="1.1"/></svg>
<span style="left:118.00px;top:495.67px;font-size:12.4px;color:#000;transform:scaleX(0.8142);">Point</span>
<svg style="left:97px;top:511.09999999999997px;" width="14" height="15" viewBox="0 0 14 15"><rect x=".5" y=".5" width="13" height="13.6" fill="#e9eef0" stroke="#7c8688"/>
<path d="M1 14.1H13" stroke="#8494b4" stroke-width="1"/>
<rect x="2.6" y="2.6" width="8.8" height="9.2" rx="1" fill="url(#gsq)" stroke="#3a5650" stroke-width="1.1"/></svg>
<span style="left:118.00px;top:512.32px;font-size:12.4px;color:#000;transform:scaleX(0.8107);">Line</span>
<svg style="left:97px;top:527.75px;" width="14" height="15" viewBox="0 0 14 15"><rect x=".5" y=".5" width="13" height="13.6" fill="#e9eef0" stroke="#7c8688"/>
<path d="M1 14.1H13" stroke="#8494b4" stroke-width="1"/>
<rect x="2.6" y="2.6" width="8.8" height="9.2" rx="1" fill="url(#gsq)" stroke="#3a5650" stroke-width="1.1"/></svg>
<span style="left:118.00px;top:528.97px;font-size:12.4px;color:#000;transform:scaleX(0.8067);">Arc</span>
<svg style="left:97px;top:544.4000000000001px;" width="14" height="15" viewBox="0 0 14 15"><rect x=".5" y=".5" width="13" height="13.6" fill="#e9eef0" stroke="#7c8688"/>
<path d="M1 14.1H13" stroke="#8494b4" stroke-width="1"/>
<rect x="2.6" y="2.6" width="8.8" height="9.2" rx="1" fill="url(#gsq)" stroke="#3a5650" stroke-width="1.1"/></svg>
<span style="left:118.00px;top:545.62px;font-size:12.4px;color:#000;transform:scaleX(0.8603);">Rectangle</span>
<svg style="left:80px;top:563.8499999999999px;" width="9" height="9" viewBox="0 0 9 9"><rect x=".5" y=".5" width="8" height="8" rx="1" fill="url(#gex)" stroke="#999"/><path d="M2 4.5H7" stroke="#3a4a8c" stroke-width="1.1"/></svg>
<svg style="left:97px;top:561.05px;" width="14" height="15" viewBox="0 0 14 15"><rect x=".5" y=".5" width="13" height="13.6" fill="#e9eef0" stroke="#7c8688"/>
<path d="M1 14.1H13" stroke="#8494b4" stroke-width="1"/>
<rect x="2.6" y="2.6" width="8.8" height="9.2" rx="1" fill="url(#gsq)" stroke="#3a5650" stroke-width="1.1"/></svg>
<span style="left:118.00px;top:562.27px;font-size:12.4px;color:#000;transform:scaleX(0.8191);">Perimeter</span>
<svg style="left:117px;top:577.7px;" width="14" height="15" viewBox="0 0 14 15"><rect x=".5" y=".5" width="13" height="13.6" fill="#e9eef0" stroke="#7c8688"/>
<path d="M1 14.1H13" stroke="#8494b4" stroke-width="1"/>
<rect x="2.6" y="2.6" width="8.8" height="9.2" rx="1" fill="url(#gsq)" stroke="#3a5650" stroke-width="1.1"/></svg>
<span style="left:138.00px;top:578.92px;font-size:12.4px;color:#000;transform:scaleX(0.8400);">Perimeter1, Rebar Dia(P40)</span>
<svg style="left:117px;top:594.35px;" width="14" height="15" viewBox="0 0 14 15"><rect x=".5" y=".5" width="13" height="13.6" fill="#e9eef0" stroke="#7c8688"/>
<path d="M1 14.1H13" stroke="#8494b4" stroke-width="1"/>
<rect x="2.6" y="2.6" width="8.8" height="9.2" rx="1" fill="url(#gsq)" stroke="#3a5650" stroke-width="1.1"/></svg>
<span style="left:138.00px;top:595.57px;font-size:12.4px;color:#000;transform:scaleX(0.8400);">Perimeter2, Rebar Dia(P40)</span>
<svg style="left:60px;top:613.8px;" width="9" height="9" viewBox="0 0 9 9"><rect x=".5" y=".5" width="8" height="8" rx="1" fill="url(#gex)" stroke="#999"/><path d="M2 4.5H7" stroke="#3a4a8c" stroke-width="1.1"/></svg>
<svg style="left:77px;top:611.0px;" width="14" height="15" viewBox="0 0 14 15"><rect x=".5" y=".5" width="13" height="13.6" fill="#e9eef0" stroke="#7c8688"/>
<path d="M1 14.1H13" stroke="#8494b4" stroke-width="1"/>
<rect x="2.6" y="2.6" width="8.8" height="9.2" rx="1" fill="url(#gsq)" stroke="#3a5650" stroke-width="1.1"/></svg>
<span style="left:98.00px;top:612.22px;font-size:12.4px;color:#000;transform:scaleX(0.8352);">Load Combination</span>
<svg style="left:97px;top:627.6500000000001px;" width="14" height="15" viewBox="0 0 14 15"><rect x=".5" y=".5" width="13" height="13.6" fill="#e9eef0" stroke="#7c8688"/>
<path d="M1 14.1H13" stroke="#8494b4" stroke-width="1"/>
<rect x="2.6" y="2.6" width="8.8" height="9.2" rx="1" fill="url(#gsq)" stroke="#3a5650" stroke-width="1.1"/></svg>
<span style="left:118.00px;top:628.87px;font-size:12.4px;color:#000;transform:scaleX(0.8458);">1:Seismic L2</span>
<div style="left:373px;top:77px;width:888px;height:21px;background:#f2f2f2;"></div>
<span style="left:381.00px;top:81.83px;font-size:12.6px;color:#6e6e6e;transform:scaleX(0.8835);">Section View : Section1</span>
<div style="left:505px;top:81px;width:1px;height:14px;background:#9a9a9a;"></div>
<span style="left:513.00px;top:81.83px;font-size:12.6px;color:#6e6e6e;transform:scaleX(0.8967);">Interaction Curve</span>
<div style="left:607px;top:78px;width:146px;height:21px;background:#fff;border:1px solid #9b9b9b;border-bottom:none;border-radius:3px 3px 0 0;"></div>
<span style="left:614.50px;top:81.92px;font-size:12.4px;color:#111;font-weight:700;transform:scaleX(0.8815);">Moment-Curvature Curve</span>
<span style="left:759.30px;top:81.83px;font-size:12.6px;color:#6e6e6e;transform:scaleX(0.9012);">Stress Contour</span>
<div style="left:373px;top:98px;width:888px;height:815px;background:#f0f0f0;"></div>
<div style="left:372px;top:77px;width:1px;height:836px;background:#a8a8a8;"></div>
<div style="left:373px;top:98px;width:1px;height:815px;background:#e8e8e8;"></div>
<div style="left:374px;top:98px;width:887px;height:2px;background:#747474;"></div>
<div style="left:374px;top:98px;width:2px;height:815px;background:#6e6e6e;"></div>
<div style="left:376px;top:100px;width:885px;height:1px;background:#fbfbfb;"></div>
<div style="left:376px;top:100px;width:1px;height:813px;background:#fbfbfb;"></div>
<div style="left:383px;top:112px;width:284.5px;height:185.5px;border:1px solid #dcdcdc;"></div>
<div style="left:390px;top:111px;width:72px;height:3px;background:#f0f0f0;"></div>
<span style="left:392.00px;top:106.91px;font-size:11px;color:#000;transform:scaleX(0.9671);">Curve Options</span>
<span style="left:393.70px;top:126.91px;font-size:11px;color:#000;letter-spacing:-0.110px;">Neutral Axis Angle</span>
<span style="left:393.70px;top:150.61px;font-size:11px;color:#000;transform:scaleX(0.9456);">Axial Load, P</span>
<span style="left:470.00px;top:150.61px;font-size:11px;color:#000;">(</span>
<span style="left:482.00px;top:150.61px;font-size:11px;color:#000;transform:scaleX(0.8920);">kN</span>
<span style="left:507.00px;top:150.61px;font-size:11px;color:#000;">)</span>
<span style="left:393.70px;top:173.91px;font-size:11px;color:#000;transform:scaleX(0.9413);">Maximum Strain</span>
<span style="left:393.70px;top:197.61px;font-size:11px;color:#000;letter-spacing:-0.091px;">No. of Points</span>
<div style="left:544px;top:121px;width:63px;height:21px;background:#fff;border:1px solid #7a7a7a;"></div>
<span style="left:549.50px;top:126.11px;font-size:11px;color:#000;">0</span>
<span style="left:611.60px;top:130.31px;font-size:11px;color:#000;transform:scaleX(0.9419);">Deg.</span>
<div style="left:544px;top:144px;width:112px;height:21px;background:#fff;border:1px solid #7a7a7a;"></div>
<span style="left:549.50px;top:149.11px;font-size:11px;color:#000;">0</span>
<div style="left:544px;top:167.5px;width:112px;height:21px;background:#fff;border:1px solid #7a7a7a;"></div>
<span style="left:549.50px;top:172.61px;font-size:11px;color:#000;transform:scaleX(1.0503);">0.12</span>
<div style="left:544px;top:191px;width:112px;height:21px;background:#fff;border:1px solid #7a7a7a;"></div>
<span style="left:549.50px;top:196.11px;font-size:11px;color:#000;transform:scaleX(0.9532);">250</span>
<div style="left:390px;top:224.5px;width:270px;height:43.0px;border:1px solid #dcdcdc;"></div>
<div style="left:393px;top:223px;width:158px;height:4px;background:#f0f0f0;"></div>
<div style="left:395px;top:217px;width:12.4px;height:12.4px;background:#fff;border:1px solid #333;"></div>
<svg style="left:395px;top:217px;" width="12.4" height="12.4" viewBox="0 0 12.5 12.5"><path d="M2.6 6.4 L5 8.8 L9.8 3.2" fill="none" stroke="#222" stroke-width="1.1"/></svg>
<span style="left:410.50px;top:220.01px;font-size:11px;color:#000;transform:scaleX(0.9555);">Display Idealized Model</span>
<div style="left:395px;top:245.7px;width:12.6px;height:12.6px;background:#fff;border:1px solid #333;"></div>
<span style="left:410.50px;top:241.61px;font-size:11px;color:#000;letter-spacing:-0.092px;">User Define Curvature</span>
<span style="left:416.70px;top:254.81px;font-size:11px;color:#000;">(for Ideal  Model) :</span>
<div style="left:544px;top:242.5px;width:63px;height:21px;background:#f0f0f0;border:1px solid #cfcfcf;"></div>
<span style="left:549.50px;top:247.61px;font-size:11px;color:#8a8a8a;">0</span>
<span style="left:612.00px;top:251.31px;font-size:11px;color:#9a9a9a;transform:scaleX(0.9540);">1/m</span>
<div style="left:573.3px;top:272px;width:85.5px;height:19.5px;background:#e1e1e1;border:1px solid #adadad;"></div>
<span style="left:602.50px;top:277.21px;font-size:11px;color:#000;letter-spacing:-0.106px;">Apply</span>
<div style="left:677px;top:105px;width:533px;height:190.5px;background:#f0f0f0;border-right:1px solid #fff;border-bottom:1px solid #fff;"></div>
<div style="left:677px;top:105px;width:532px;height:1px;background:#b4b4b4;"></div>
<div style="left:677px;top:106px;width:532px;height:1px;background:#6a6a6a;"></div>
<div style="left:678px;top:107px;width:531px;height:1px;background:#4c4c4c;"></div>
<div style="left:677px;top:105px;width:1px;height:189.5px;background:#b4b4b4;"></div>
<div style="left:678px;top:106px;width:1px;height:188.5px;background:#6a6a6a;"></div>
<div style="left:679px;top:107px;width:1px;height:187.5px;background:#4c4c4c;"></div>
<div style="left:680px;top:108px;width:509px;height:187px;background:#111;"></div>
<div style="left:680px;top:108px;width:49px;height:40px;background:#f0f0f0;border-top:1px solid #fff;border-left:1px solid #fff;border-right:1px solid #111;border-bottom:1px solid #111;"></div>
<span style="left:693.70px;top:122.81px;font-size:10.6px;color:#111;letter-spacing:-0.031px;">Point</span>
<div style="left:729px;top:108px;width:92px;height:40px;background:#f0f0f0;border-top:1px solid #fff;border-left:1px solid #fff;border-right:1px solid #111;border-bottom:1px solid #111;"></div>
<span style="left:754.90px;top:114.61px;font-size:10.6px;color:#111;">Concrete</span>
<span style="left:762.65px;top:129.31px;font-size:10.6px;color:#111;letter-spacing:-0.031px;">Strain</span>
<div style="left:821px;top:108px;width:92px;height:40px;background:#f0f0f0;border-top:1px solid #fff;border-left:1px solid #fff;border-right:1px solid #111;border-bottom:1px solid #111;"></div>
<span style="left:838.90px;top:114.61px;font-size:10.6px;color:#111;transform:scaleX(1.0437);">Neutral Axis</span>
<span style="left:844.90px;top:129.31px;font-size:10.6px;color:#111;letter-spacing:-0.010px;">Depth (m)</span>
<div style="left:913px;top:108px;width:92px;height:40px;background:#f0f0f0;border-top:1px solid #fff;border-left:1px solid #fff;border-right:1px solid #111;border-bottom:1px solid #111;"></div>
<span style="left:946.90px;top:114.61px;font-size:10.6px;color:#111;transform:scaleX(0.9356);">Rebar</span>
<span style="left:946.65px;top:129.31px;font-size:10.6px;color:#111;letter-spacing:-0.031px;">Strain</span>
<div style="left:1005px;top:108px;width:92px;height:40px;background:#f0f0f0;border-top:1px solid #fff;border-left:1px solid #fff;border-right:1px solid #111;border-bottom:1px solid #111;"></div>
<span style="left:1028.65px;top:114.61px;font-size:10.6px;color:#111;letter-spacing:0.109px;">Curvature</span>
<span style="left:1022.65px;top:129.31px;font-size:10.6px;color:#111;letter-spacing:0.128px;">*10^-3 (1/m)</span>
<div style="left:1097px;top:108px;width:92px;height:40px;background:#f0f0f0;border-top:1px solid #fff;border-left:1px solid #fff;border-right:1px solid #111;border-bottom:1px solid #111;"></div>
<span style="left:1125.90px;top:114.61px;font-size:10.6px;color:#111;transform:scaleX(0.9665);">Moment</span>
<span style="left:1127.65px;top:129.31px;font-size:10.6px;color:#111;transform:scaleX(0.9567);">(kN×m)</span>
<div style="left:680px;top:149px;width:49px;height:21px;background:#f0f0f0;border-top:1px solid #fff;border-left:1px solid #fff;border-right:1px solid #111;border-bottom:1px solid #111;"></div>
<span style="left:699.25px;top:154.13px;font-size:10.8px;color:#111;transform:scaleX(0.9571);">10</span>
<div style="left:729px;top:149px;width:92px;height:21px;background:#a6caf0;border-right:1px solid #6f7f92;border-bottom:1px solid #6f7f92;"></div>
<span style="left:754.45px;top:154.13px;font-size:10.8px;color:#111;transform:scaleX(0.9657);">0.000051</span>
<div style="left:821px;top:149px;width:92px;height:21px;background:#a6caf0;border-right:1px solid #6f7f92;border-bottom:1px solid #6f7f92;"></div>
<span style="left:846.45px;top:154.13px;font-size:10.8px;color:#111;transform:scaleX(0.9657);">0.452569</span>
<div style="left:913px;top:149px;width:92px;height:21px;background:#a6caf0;border-right:1px solid #6f7f92;border-bottom:1px solid #6f7f92;"></div>
<span style="left:936.45px;top:154.13px;font-size:10.8px;color:#111;letter-spacing:-0.127px;">-0.000105</span>
<div style="left:1005px;top:149px;width:92px;height:21px;background:#a6caf0;border-right:1px solid #6f7f92;border-bottom:1px solid #6f7f92;"></div>
<span style="left:1030.45px;top:154.13px;font-size:10.8px;color:#111;letter-spacing:-0.092px;">0.112000</span>
<div style="left:1097px;top:149px;width:92px;height:21px;background:#a6caf0;border-right:1px solid #6f7f92;border-bottom:1px solid #6f7f92;"></div>
<span style="left:1125.45px;top:154.13px;font-size:10.8px;color:#111;transform:scaleX(0.9608);">391.042</span>
<div style="left:680px;top:170px;width:49px;height:21px;background:#f0f0f0;border-top:1px solid #fff;border-left:1px solid #fff;border-right:1px solid #111;border-bottom:1px solid #111;"></div>
<span style="left:699.25px;top:174.98px;font-size:10.8px;color:#111;letter-spacing:0.141px;">11</span>
<div style="left:729px;top:170px;width:92px;height:21px;background:#a6caf0;border-right:1px solid #6f7f92;border-bottom:1px solid #6f7f92;"></div>
<span style="left:754.45px;top:174.98px;font-size:10.8px;color:#111;transform:scaleX(0.9657);">0.000063</span>
<div style="left:821px;top:170px;width:92px;height:21px;background:#a6caf0;border-right:1px solid #6f7f92;border-bottom:1px solid #6f7f92;"></div>
<span style="left:846.45px;top:174.98px;font-size:10.8px;color:#111;transform:scaleX(0.9657);">0.452571</span>
<div style="left:913px;top:170px;width:92px;height:21px;background:#a6caf0;border-right:1px solid #6f7f92;border-bottom:1px solid #6f7f92;"></div>
<span style="left:936.45px;top:174.98px;font-size:10.8px;color:#111;letter-spacing:-0.127px;">-0.000129</span>
<div style="left:1005px;top:170px;width:92px;height:21px;background:#a6caf0;border-right:1px solid #6f7f92;border-bottom:1px solid #6f7f92;"></div>
<span style="left:1030.45px;top:174.98px;font-size:10.8px;color:#111;transform:scaleX(0.9657);">0.138271</span>
<div style="left:1097px;top:170px;width:92px;height:21px;background:#a6caf0;border-right:1px solid #6f7f92;border-bottom:1px solid #6f7f92;"></div>
<span style="left:1125.45px;top:174.98px;font-size:10.8px;color:#111;transform:scaleX(0.9608);">482.767</span>
<div style="left:680px;top:191px;width:49px;height:21px;background:#f0f0f0;border-top:1px solid #fff;border-left:1px solid #fff;border-right:1px solid #111;border-bottom:1px solid #111;"></div>
<span style="left:699.25px;top:195.83px;font-size:10.8px;color:#111;transform:scaleX(0.9571);">12</span>
<div style="left:729px;top:191px;width:92px;height:21px;background:#a6caf0;border-right:1px solid #6f7f92;border-bottom:1px solid #6f7f92;"></div>
<span style="left:754.45px;top:195.83px;font-size:10.8px;color:#111;transform:scaleX(0.9657);">0.000076</span>
<div style="left:821px;top:191px;width:92px;height:21px;background:#a6caf0;border-right:1px solid #6f7f92;border-bottom:1px solid #6f7f92;"></div>
<span style="left:846.45px;top:195.83px;font-size:10.8px;color:#111;transform:scaleX(0.9657);">0.452573</span>
<div style="left:913px;top:191px;width:92px;height:21px;background:#a6caf0;border-right:1px solid #6f7f92;border-bottom:1px solid #6f7f92;"></div>
<span style="left:936.45px;top:195.83px;font-size:10.8px;color:#111;letter-spacing:-0.127px;">-0.000157</span>
<div style="left:1005px;top:191px;width:92px;height:21px;background:#a6caf0;border-right:1px solid #6f7f92;border-bottom:1px solid #6f7f92;"></div>
<span style="left:1030.45px;top:195.83px;font-size:10.8px;color:#111;transform:scaleX(0.9657);">0.167308</span>
<div style="left:1097px;top:191px;width:92px;height:21px;background:#a6caf0;border-right:1px solid #6f7f92;border-bottom:1px solid #6f7f92;"></div>
<span style="left:1125.45px;top:195.83px;font-size:10.8px;color:#111;transform:scaleX(0.9608);">584.145</span>
<div style="left:680px;top:212px;width:49px;height:20px;background:#f0f0f0;border-top:1px solid #fff;border-left:1px solid #fff;border-right:1px solid #111;border-bottom:1px solid #111;"></div>
<span style="left:699.25px;top:216.68px;font-size:10.8px;color:#111;transform:scaleX(0.9571);">13</span>
<div style="left:729px;top:212px;width:92px;height:20px;background:#a6caf0;border-right:1px solid #6f7f92;border-bottom:1px solid #6f7f92;"></div>
<span style="left:754.45px;top:216.68px;font-size:10.8px;color:#111;transform:scaleX(0.9657);">0.000090</span>
<div style="left:821px;top:212px;width:92px;height:20px;background:#a6caf0;border-right:1px solid #6f7f92;border-bottom:1px solid #6f7f92;"></div>
<span style="left:846.45px;top:216.68px;font-size:10.8px;color:#111;transform:scaleX(0.9657);">0.452576</span>
<div style="left:913px;top:212px;width:92px;height:20px;background:#a6caf0;border-right:1px solid #6f7f92;border-bottom:1px solid #6f7f92;"></div>
<span style="left:936.45px;top:216.68px;font-size:10.8px;color:#111;letter-spacing:-0.127px;">-0.000186</span>
<div style="left:1005px;top:212px;width:92px;height:20px;background:#a6caf0;border-right:1px solid #6f7f92;border-bottom:1px solid #6f7f92;"></div>
<span style="left:1030.45px;top:216.68px;font-size:10.8px;color:#111;letter-spacing:-0.092px;">0.199110</span>
<div style="left:1097px;top:212px;width:92px;height:20px;background:#a6caf0;border-right:1px solid #6f7f92;border-bottom:1px solid #6f7f92;"></div>
<span style="left:1125.45px;top:216.68px;font-size:10.8px;color:#111;transform:scaleX(0.9608);">695.177</span>
<div style="left:680px;top:232px;width:49px;height:21px;background:#f0f0f0;border-top:1px solid #fff;border-left:1px solid #fff;border-right:1px solid #111;border-bottom:1px solid #111;"></div>
<span style="left:699.25px;top:237.53px;font-size:10.8px;color:#111;transform:scaleX(0.9571);">14</span>
<div style="left:729px;top:232px;width:92px;height:21px;background:#a6caf0;border-right:1px solid #6f7f92;border-bottom:1px solid #6f7f92;"></div>
<span style="left:754.45px;top:237.53px;font-size:10.8px;color:#111;transform:scaleX(0.9657);">0.000106</span>
<div style="left:821px;top:232px;width:92px;height:21px;background:#a6caf0;border-right:1px solid #6f7f92;border-bottom:1px solid #6f7f92;"></div>
<span style="left:846.45px;top:237.53px;font-size:10.8px;color:#111;transform:scaleX(0.9657);">0.452580</span>
<div style="left:913px;top:232px;width:92px;height:21px;background:#a6caf0;border-right:1px solid #6f7f92;border-bottom:1px solid #6f7f92;"></div>
<span style="left:936.45px;top:237.53px;font-size:10.8px;color:#111;letter-spacing:-0.127px;">-0.000219</span>
<div style="left:1005px;top:232px;width:92px;height:21px;background:#a6caf0;border-right:1px solid #6f7f92;border-bottom:1px solid #6f7f92;"></div>
<span style="left:1030.45px;top:237.53px;font-size:10.8px;color:#111;transform:scaleX(0.9657);">0.233678</span>
<div style="left:1097px;top:232px;width:92px;height:21px;background:#a6caf0;border-right:1px solid #6f7f92;border-bottom:1px solid #6f7f92;"></div>
<span style="left:1125.45px;top:237.53px;font-size:10.8px;color:#111;transform:scaleX(0.9608);">815.861</span>
<div style="left:680px;top:253px;width:49px;height:21px;background:#f0f0f0;border-top:1px solid #fff;border-left:1px solid #fff;border-right:1px solid #111;border-bottom:1px solid #111;"></div>
<span style="left:699.25px;top:258.38px;font-size:10.8px;color:#111;transform:scaleX(0.9571);">15</span>
<div style="left:729px;top:253px;width:92px;height:21px;background:#a6caf0;border-right:1px solid #6f7f92;border-bottom:1px solid #6f7f92;"></div>
<span style="left:754.45px;top:258.38px;font-size:10.8px;color:#111;transform:scaleX(0.9657);">0.000123</span>
<div style="left:821px;top:253px;width:92px;height:21px;background:#a6caf0;border-right:1px solid #6f7f92;border-bottom:1px solid #6f7f92;"></div>
<span style="left:846.45px;top:258.38px;font-size:10.8px;color:#111;transform:scaleX(0.9657);">0.452585</span>
<div style="left:913px;top:253px;width:92px;height:21px;background:#a6caf0;border-right:1px solid #6f7f92;border-bottom:1px solid #6f7f92;"></div>
<span style="left:936.45px;top:258.38px;font-size:10.8px;color:#111;letter-spacing:-0.127px;">-0.000254</span>
<div style="left:1005px;top:253px;width:92px;height:21px;background:#a6caf0;border-right:1px solid #6f7f92;border-bottom:1px solid #6f7f92;"></div>
<span style="left:1030.45px;top:258.38px;font-size:10.8px;color:#111;letter-spacing:-0.092px;">0.271011</span>
<div style="left:1097px;top:253px;width:92px;height:21px;background:#a6caf0;border-right:1px solid #6f7f92;border-bottom:1px solid #6f7f92;"></div>
<span style="left:1125.45px;top:258.38px;font-size:10.8px;color:#111;transform:scaleX(0.9608);">946.197</span>
<div style="left:680px;top:274px;width:49px;height:21px;background:#f0f0f0;border-top:1px solid #fff;border-left:1px solid #fff;border-right:1px solid #111;border-bottom:1px solid #111;"></div>
<span style="left:699.25px;top:279.23px;font-size:10.8px;color:#111;transform:scaleX(0.9571);">16</span>
<div style="left:729px;top:274px;width:92px;height:21px;background:#a6caf0;border-right:1px solid #6f7f92;border-bottom:1px solid #6f7f92;"></div>
<span style="left:754.45px;top:279.23px;font-size:10.8px;color:#111;transform:scaleX(0.9657);">0.000141</span>
<div style="left:821px;top:274px;width:92px;height:21px;background:#a6caf0;border-right:1px solid #6f7f92;border-bottom:1px solid #6f7f92;"></div>
<span style="left:846.45px;top:279.23px;font-size:10.8px;color:#111;transform:scaleX(0.9657);">0.452591</span>
<div style="left:913px;top:274px;width:92px;height:21px;background:#a6caf0;border-right:1px solid #6f7f92;border-bottom:1px solid #6f7f92;"></div>
<span style="left:936.45px;top:279.23px;font-size:10.8px;color:#111;letter-spacing:-0.127px;">-0.000291</span>
<div style="left:1005px;top:274px;width:92px;height:21px;background:#a6caf0;border-right:1px solid #6f7f92;border-bottom:1px solid #6f7f92;"></div>
<span style="left:1030.45px;top:279.23px;font-size:10.8px;color:#111;letter-spacing:0.107px;">0.311110</span>
<div style="left:1097px;top:274px;width:92px;height:21px;background:#a6caf0;border-right:1px solid #6f7f92;border-bottom:1px solid #6f7f92;"></div>
<span style="left:1122.70px;top:279.23px;font-size:10.8px;color:#111;transform:scaleX(0.9546);">1086.182</span>
<div style="left:1191px;top:107.5px;width:18.5px;height:187.5px;background:#f0f0f0;"></div>
<div style="left:1193px;top:130px;width:15px;height:17.5px;background:#cdcdcd;"></div>
<svg style="left:1195px;top:112px;" width="11" height="9" viewBox="0 0 11 9"><path d="M2 6.5 L5.5 3 L9 6.5" fill="none" stroke="#404040" stroke-width="1.7"/></svg>
<svg style="left:1195px;top:281px;" width="11" height="9" viewBox="0 0 11 9"><path d="M2 2.5 L5.5 6 L9 2.5" fill="none" stroke="#404040" stroke-width="1.7"/></svg>
<div style="left:383px;top:305px;width:581px;height:518px;background:#fff;border-top:1px solid #959595;border-left:1px solid #959595;border-right:2px solid #f7f7f7;border-bottom:2px solid #f7f7f7;"></div>
<div style="left:384px;top:306px;width:578.5px;height:1px;background:#ececec;"></div>
<div style="left:384px;top:306px;width:1px;height:514px;background:#ececec;"></div>
<span style="left:584.60px;top:323.24px;font-size:13.4px;color:#2c2c2c;font-family:'Liberation Mono';letter-spacing:0.014px;">Moment Curvature Curve</span>
<span style="left:616.70px;top:340.24px;font-size:13.4px;color:#2c2c2c;font-family:'Liberation Mono';letter-spacing:0.014px;">Axial load = 0 kN</span>
<span style="left:588.50px;top:356.54px;font-size:13.4px;color:#2c2c2c;font-family:'Liberation Mono';letter-spacing:0.014px;">Neutral Axis Angle = 0</span>
<svg style="left:0;top:0" width="1261" height="913" viewBox="0 0 1261 913"><path d="M448.35 712.50H933.95" stroke="#bcbcbc" stroke-width="1.8"/><path d="M448.35 683.80H933.95" stroke="#bcbcbc" stroke-width="1.8"/><path d="M448.35 655.10H933.95" stroke="#bcbcbc" stroke-width="1.8"/><path d="M448.35 626.40H933.95" stroke="#bcbcbc" stroke-width="1.8"/><path d="M448.35 597.70H933.95" stroke="#bcbcbc" stroke-width="1.8"/><path d="M448.35 569.00H933.95" stroke="#bcbcbc" stroke-width="1.8"/><path d="M448.35 540.30H933.95" stroke="#bcbcbc" stroke-width="1.8"/><path d="M448.35 511.60H933.95" stroke="#bcbcbc" stroke-width="1.8"/><path d="M448.35 482.90H933.95" stroke="#bcbcbc" stroke-width="1.8"/><path d="M448.35 454.20H933.95" stroke="#bcbcbc" stroke-width="1.8"/><path d="M448.35 425.50H933.95" stroke="#bcbcbc" stroke-width="1.8"/><path d="M448.35 396.80H933.95" stroke="#bcbcbc" stroke-width="1.8"/><path d="M472.68 382.6V741.0" stroke="#8a8a8a" stroke-width="1.25"/><path d="M496.96 382.6V741.0" stroke="#8a8a8a" stroke-width="1.25"/><path d="M521.24 382.6V741.0" stroke="#8a8a8a" stroke-width="1.25"/><path d="M545.52 382.6V741.0" stroke="#8a8a8a" stroke-width="1.25"/><path d="M569.80 382.6V741.0" stroke="#8a8a8a" stroke-width="1.25"/><path d="M594.08 382.6V741.0" stroke="#8a8a8a" stroke-width="1.25"/><path d="M618.36 382.6V741.0" stroke="#8a8a8a" stroke-width="1.25"/><path d="M642.64 382.6V741.0" stroke="#8a8a8a" stroke-width="1.25"/><path d="M666.92 382.6V741.0" stroke="#8a8a8a" stroke-width="1.25"/><path d="M691.20 382.6V741.0" stroke="#8a8a8a" stroke-width="1.25"/><path d="M715.48 382.6V741.0" stroke="#8a8a8a" stroke-width="1.25"/><path d="M739.76 382.6V741.0" stroke="#8a8a8a" stroke-width="1.25"/><path d="M764.04 382.6V741.0" stroke="#8a8a8a" stroke-width="1.25"/><path d="M788.32 382.6V741.0" stroke="#8a8a8a" stroke-width="1.25"/><path d="M812.60 382.6V741.0" stroke="#8a8a8a" stroke-width="1.25"/><path d="M836.88 382.6V741.0" stroke="#8a8a8a" stroke-width="1.25"/><path d="M861.16 382.6V741.0" stroke="#8a8a8a" stroke-width="1.25"/><path d="M885.44 382.6V741.0" stroke="#8a8a8a" stroke-width="1.25"/><path d="M909.72 382.6V741.0" stroke="#8a8a8a" stroke-width="1.25"/><path d="M934.00 382.6V741.0" stroke="#8a8a8a" stroke-width="1.25"/><path d="M448.35 382.6V741.4H933.95 M448.35 382.6H933.95" fill="none" stroke="#0c0c0c" stroke-width="1.5" stroke-linecap="square"/><path d="M443.05 741.25H448.35" stroke="#3c3c3c" stroke-width="1.6"/><path d="M443.05 712.55H448.35" stroke="#3c3c3c" stroke-width="1.6"/><path d="M443.05 683.85H448.35" stroke="#3c3c3c" stroke-width="1.6"/><path d="M443.05 655.15H448.35" stroke="#3c3c3c" stroke-width="1.6"/><path d="M443.05 626.45H448.35" stroke="#3c3c3c" stroke-width="1.6"/><path d="M443.05 597.75H448.35" stroke="#3c3c3c" stroke-width="1.6"/><path d="M443.05 569.05H448.35" stroke="#3c3c3c" stroke-width="1.6"/><path d="M443.05 540.35H448.35" stroke="#3c3c3c" stroke-width="1.6"/><path d="M443.05 511.65H448.35" stroke="#3c3c3c" stroke-width="1.6"/><path d="M443.05 482.95H448.35" stroke="#3c3c3c" stroke-width="1.6"/><path d="M443.05 454.25H448.35" stroke="#3c3c3c" stroke-width="1.6"/><path d="M443.05 425.55H448.35" stroke="#3c3c3c" stroke-width="1.6"/><path d="M443.05 396.85H448.35" stroke="#3c3c3c" stroke-width="1.6"/><path d="M448.45 741.0V748.0" stroke="#1c1c1c" stroke-width="1.3"/><path d="M472.73 741.0V748.0" stroke="#1c1c1c" stroke-width="1.3"/><path d="M497.01 741.0V748.0" stroke="#1c1c1c" stroke-width="1.3"/><path d="M521.29 741.0V748.0" stroke="#1c1c1c" stroke-width="1.3"/><path d="M545.57 741.0V748.0" stroke="#1c1c1c" stroke-width="1.3"/><path d="M569.85 741.0V748.0" stroke="#1c1c1c" stroke-width="1.3"/><path d="M594.13 741.0V748.0" stroke="#1c1c1c" stroke-width="1.3"/><path d="M618.41 741.0V748.0" stroke="#1c1c1c" stroke-width="1.3"/><path d="M642.69 741.0V748.0" stroke="#1c1c1c" stroke-width="1.3"/><path d="M666.97 741.0V748.0" stroke="#1c1c1c" stroke-width="1.3"/><path d="M691.25 741.0V748.0" stroke="#1c1c1c" stroke-width="1.3"/><path d="M715.53 741.0V748.0" stroke="#1c1c1c" stroke-width="1.3"/><path d="M739.81 741.0V748.0" stroke="#1c1c1c" stroke-width="1.3"/><path d="M764.09 741.0V748.0" stroke="#1c1c1c" stroke-width="1.3"/><path d="M788.37 741.0V748.0" stroke="#1c1c1c" stroke-width="1.3"/><path d="M812.65 741.0V748.0" stroke="#1c1c1c" stroke-width="1.3"/><path d="M836.93 741.0V748.0" stroke="#1c1c1c" stroke-width="1.3"/><path d="M861.21 741.0V748.0" stroke="#1c1c1c" stroke-width="1.3"/><path d="M885.49 741.0V748.0" stroke="#1c1c1c" stroke-width="1.3"/><path d="M909.77 741.0V748.0" stroke="#1c1c1c" stroke-width="1.3"/><path d="M934.05 741.0V748.0" stroke="#1c1c1c" stroke-width="1.3"/><path d="M448.7 741 L455 610 L459 540 L461.3 495 L462.6 470 L463.8 455 L465.8 447 L468 441 L471.9 432 L476.3 425.8 L480.8 422.2 L485.8 418.1 L489.6 415.6 L492.6 414 L497 412.4 L501 411.8 L505 411.9 L509 412.5 L514 413.8 L519 415.5 L524 417 L530 419 L537 420.6 L544 421.3 L551 421.2 L560 420.6 L570 419.6 L581 418.6 L595 418 L606 417.6 L613 416.6 L625 416.2 L660 416.1 L700 416.2 L708 416.4 L716 417.5 L750 418 L933 418" fill="none" stroke="#1a8226" stroke-width="1.9" stroke-linejoin="round"/><path d="M448.95000000000005 741.0 L464.1 418.3 H933.95" fill="none" stroke="#0808cc" stroke-width="2.4" stroke-linejoin="miter"/><circle cx="464.2" cy="418" r="4.1" fill="#f20a10" stroke="#6a0000" stroke-width="0.9"/><circle cx="492.3" cy="413.8" r="4.1" fill="#f20a10" stroke="#6a0000" stroke-width="0.9"/><circle cx="461.3" cy="490.8" r="4.1" fill="#f20a10" stroke="#6a0000" stroke-width="0.9"/><circle cx="459" cy="520" r="4.1" fill="#f20a10" stroke="#6a0000" stroke-width="0.9"/></svg>
<span style="left:435.08px;top:736.45px;font-size:9.7px;color:#2e2e2e;font-family:'Liberation Serif';-webkit-text-stroke:0.3px #2e2e2e;">0</span>
<span style="left:417.92px;top:707.75px;font-size:9.7px;color:#2e2e2e;font-family:'Liberation Serif';transform:scaleX(1.1603);-webkit-text-stroke:0.3px #2e2e2e;">1000</span>
<span style="left:417.92px;top:679.05px;font-size:9.7px;color:#2e2e2e;font-family:'Liberation Serif';transform:scaleX(1.1603);-webkit-text-stroke:0.3px #2e2e2e;">2000</span>
<span style="left:417.92px;top:650.35px;font-size:9.7px;color:#2e2e2e;font-family:'Liberation Serif';transform:scaleX(1.1603);-webkit-text-stroke:0.3px #2e2e2e;">3000</span>
<span style="left:417.92px;top:621.65px;font-size:9.7px;color:#2e2e2e;font-family:'Liberation Serif';transform:scaleX(1.1603);-webkit-text-stroke:0.3px #2e2e2e;">4000</span>
<span style="left:417.92px;top:592.95px;font-size:9.7px;color:#2e2e2e;font-family:'Liberation Serif';transform:scaleX(1.1603);-webkit-text-stroke:0.3px #2e2e2e;">5000</span>
<span style="left:417.92px;top:564.25px;font-size:9.7px;color:#2e2e2e;font-family:'Liberation Serif';transform:scaleX(1.1603);-webkit-text-stroke:0.3px #2e2e2e;">6000</span>
<span style="left:417.92px;top:535.55px;font-size:9.7px;color:#2e2e2e;font-family:'Liberation Serif';transform:scaleX(1.1603);-webkit-text-stroke:0.3px #2e2e2e;">7000</span>
<span style="left:417.92px;top:506.85px;font-size:9.7px;color:#2e2e2e;font-family:'Liberation Serif';transform:scaleX(1.1603);-webkit-text-stroke:0.3px #2e2e2e;">8000</span>
<span style="left:417.92px;top:478.15px;font-size:9.7px;color:#2e2e2e;font-family:'Liberation Serif';transform:scaleX(1.1603);-webkit-text-stroke:0.3px #2e2e2e;">9000</span>
<span style="left:412.20px;top:449.45px;font-size:9.7px;color:#2e2e2e;font-family:'Liberation Serif';transform:scaleX(1.1644);-webkit-text-stroke:0.3px #2e2e2e;">10000</span>
<span style="left:412.20px;top:420.75px;font-size:9.7px;color:#2e2e2e;font-family:'Liberation Serif';transform:scaleX(1.1819);-webkit-text-stroke:0.3px #2e2e2e;">11000</span>
<span style="left:412.20px;top:392.05px;font-size:9.7px;color:#2e2e2e;font-family:'Liberation Serif';transform:scaleX(1.1644);-webkit-text-stroke:0.3px #2e2e2e;">12000</span>
<span style="left:448.39px;top:751.45px;font-size:9.7px;color:#2e2e2e;font-family:'Liberation Serif';-webkit-text-stroke:0.3px #2e2e2e;">0</span>
<span style="left:472.67px;top:751.45px;font-size:9.7px;color:#2e2e2e;font-family:'Liberation Serif';-webkit-text-stroke:0.3px #2e2e2e;">5</span>
<span style="left:494.09px;top:751.45px;font-size:9.7px;color:#2e2e2e;font-family:'Liberation Serif';transform:scaleX(1.1396);-webkit-text-stroke:0.3px #2e2e2e;">10</span>
<span style="left:518.37px;top:751.45px;font-size:9.7px;color:#2e2e2e;font-family:'Liberation Serif';transform:scaleX(1.1396);-webkit-text-stroke:0.3px #2e2e2e;">15</span>
<span style="left:542.65px;top:751.45px;font-size:9.7px;color:#2e2e2e;font-family:'Liberation Serif';transform:scaleX(1.1396);-webkit-text-stroke:0.3px #2e2e2e;">20</span>
<span style="left:566.93px;top:751.45px;font-size:9.7px;color:#2e2e2e;font-family:'Liberation Serif';transform:scaleX(1.1396);-webkit-text-stroke:0.3px #2e2e2e;">25</span>
<span style="left:591.21px;top:751.45px;font-size:9.7px;color:#2e2e2e;font-family:'Liberation Serif';transform:scaleX(1.1396);-webkit-text-stroke:0.3px #2e2e2e;">30</span>
<span style="left:615.49px;top:751.45px;font-size:9.7px;color:#2e2e2e;font-family:'Liberation Serif';transform:scaleX(1.1396);-webkit-text-stroke:0.3px #2e2e2e;">35</span>
<span style="left:639.77px;top:751.45px;font-size:9.7px;color:#2e2e2e;font-family:'Liberation Serif';transform:scaleX(1.1396);-webkit-text-stroke:0.3px #2e2e2e;">40</span>
<span style="left:664.05px;top:751.45px;font-size:9.7px;color:#2e2e2e;font-family:'Liberation Serif';transform:scaleX(1.1396);-webkit-text-stroke:0.3px #2e2e2e;">45</span>
<span style="left:688.33px;top:751.45px;font-size:9.7px;color:#2e2e2e;font-family:'Liberation Serif';transform:scaleX(1.1396);-webkit-text-stroke:0.3px #2e2e2e;">50</span>
<span style="left:712.61px;top:751.45px;font-size:9.7px;color:#2e2e2e;font-family:'Liberation Serif';transform:scaleX(1.1396);-webkit-text-stroke:0.3px #2e2e2e;">55</span>
<span style="left:463.41px;top:393.20px;font-size:15.5px;color:#0c0c0c;font-family:'Liberation Serif';font-weight:700;">f</span>
<span style="left:492.15px;top:389.00px;font-size:15.5px;color:#0c0c0c;font-family:'Liberation Serif';font-weight:700;">c</span>
<span style="left:471.12px;top:477.40px;font-size:15.5px;color:#0c0c0c;font-family:'Liberation Serif';font-weight:700;">a</span>
<span style="left:468.69px;top:521.40px;font-size:15.5px;color:#0c0c0c;font-family:'Liberation Serif';font-weight:700;">b</span>
<span style="left:604.20px;top:783.34px;font-size:11.4px;color:#2c2c2c;font-family:'Liberation Mono';">Curvature*0.001(1/m)</span>
<span style="left:503.00px;top:797.92px;font-size:11.7px;color:#2c2c2c;font-family:'Liberation Mono';letter-spacing:-0.014px;">Cracked Moment of Inertia (Icrack) = 0.0963952 m</span>
<div style="left:840px;top:799px;width:6px;height:7.4px;border:1px solid #444;"></div>
<span style="left:401px;top:563.5px;font-size:11.2px;color:#555;font-family:'Liberation Mono';transform:translate(-50%,-50%) rotate(-90deg);transform-origin:50% 50%">Moment Mn (kN×m)</span>
<span style="left:393.80px;top:829.41px;font-size:11px;color:#000;letter-spacing:-0.079px;">a : Crack starts</span>
<span style="left:393.80px;top:847.91px;font-size:11px;color:#000;letter-spacing:-0.080px;">b : Concrete or tensile steel yields</span>
<span style="left:393.80px;top:867.11px;font-size:11px;color:#000;letter-spacing:-0.087px;">c : Both concrete and tensile steel yield</span>
<span style="left:634.40px;top:829.41px;font-size:11px;color:#000;letter-spacing:-0.046px;">d : Concrete Strain reaches the ultimate strain</span>
<span style="left:634.40px;top:847.91px;font-size:11px;color:#000;letter-spacing:-0.055px;">e : Tensile steel Strain reaches the ultimate strain</span>
<span style="left:636.50px;top:867.11px;font-size:11px;color:#000;transform:scaleX(0.9663);">f : Yield in Idealized Model</span>
<div style="left:974px;top:306px;width:235.5px;height:170.5px;background:#f0f0f0;border-right:1px solid #fff;border-bottom:1px solid #fff;"></div>
<div style="left:974px;top:306px;width:234.5px;height:1px;background:#b4b4b4;"></div>
<div style="left:974px;top:307px;width:234.5px;height:1px;background:#6a6a6a;"></div>
<div style="left:975px;top:308px;width:233.5px;height:1px;background:#4c4c4c;"></div>
<div style="left:974px;top:306px;width:1px;height:169.5px;background:#b4b4b4;"></div>
<div style="left:975px;top:307px;width:1px;height:168.5px;background:#6a6a6a;"></div>
<div style="left:976px;top:308px;width:1px;height:167.5px;background:#4c4c4c;"></div>
<div style="left:977px;top:309px;width:231px;height:165px;background:#111;"></div>
<div style="left:977px;top:309px;width:95px;height:39px;background:#f0f0f0;border-top:1px solid #fff;border-left:1px solid #fff;border-right:1px solid #111;border-bottom:1px solid #111;"></div>
<div style="left:1072px;top:309px;width:68px;height:39px;background:#f0f0f0;border-top:1px solid #fff;border-left:1px solid #fff;border-right:1px solid #111;border-bottom:1px solid #111;"></div>
<span style="left:1083.65px;top:315.11px;font-size:10.6px;color:#111;letter-spacing:0.109px;">Curvature</span>
<span style="left:1092.40px;top:329.81px;font-size:10.6px;color:#111;letter-spacing:-0.049px;">*10^-3</span>
<div style="left:1140px;top:309px;width:68px;height:39px;background:#f0f0f0;border-top:1px solid #fff;border-left:1px solid #fff;border-right:1px solid #111;border-bottom:1px solid #111;"></div>
<span style="left:1156.90px;top:315.11px;font-size:10.6px;color:#111;transform:scaleX(0.9665);">Moment</span>
<span style="left:1158.65px;top:329.81px;font-size:10.6px;color:#111;transform:scaleX(0.9567);">(kN×m)</span>
<div style="left:977px;top:349px;width:95px;height:21px;background:#f0f0f0;border-top:1px solid #fff;border-left:1px solid #fff;border-right:1px solid #111;border-bottom:1px solid #111;"></div>
<div style="left:1072px;top:349px;width:68px;height:21px;background:#a6caf0;border-right:1px solid #6f7f92;border-bottom:1px solid #6f7f92;"></div>
<div style="left:1140px;top:349px;width:68px;height:21px;background:#a6caf0;border-right:1px solid #6f7f92;border-bottom:1px solid #6f7f92;"></div>
<span style="left:1192.00px;top:354.13px;font-size:10.8px;color:#111;">1</span>
<div style="left:977px;top:370px;width:95px;height:21px;background:#f0f0f0;border-top:1px solid #fff;border-left:1px solid #fff;border-right:1px solid #111;border-bottom:1px solid #111;"></div>
<div style="left:1072px;top:370px;width:68px;height:21px;background:#a6caf0;border-right:1px solid #6f7f92;border-bottom:1px solid #6f7f92;"></div>
<div style="left:1140px;top:370px;width:68px;height:21px;background:#a6caf0;border-right:1px solid #6f7f92;border-bottom:1px solid #6f7f92;"></div>
<span style="left:1192.40px;top:374.98px;font-size:10.8px;color:#111;">6</span>
<div style="left:977px;top:391px;width:95px;height:21px;background:#f0f0f0;border-top:1px solid #fff;border-left:1px solid #fff;border-right:1px solid #111;border-bottom:1px solid #111;"></div>
<div style="left:1072px;top:391px;width:68px;height:21px;background:#a6caf0;border-right:1px solid #6f7f92;border-bottom:1px solid #6f7f92;"></div>
<div style="left:1140px;top:391px;width:68px;height:21px;background:#a6caf0;border-right:1px solid #6f7f92;border-bottom:1px solid #6f7f92;"></div>
<span style="left:1195.00px;top:395.83px;font-size:10.8px;color:#111;">5</span>
<div style="left:977px;top:412px;width:95px;height:20px;background:#f0f0f0;border-top:1px solid #fff;border-left:1px solid #fff;border-right:1px solid #111;border-bottom:1px solid #111;"></div>
<div style="left:1072px;top:412px;width:68px;height:20px;background:#a6caf0;border-right:1px solid #6f7f92;border-bottom:1px solid #6f7f92;"></div>
<div style="left:1140px;top:412px;width:68px;height:20px;background:#a6caf0;border-right:1px solid #6f7f92;border-bottom:1px solid #6f7f92;"></div>
<span style="left:1189.00px;top:416.68px;font-size:10.8px;color:#111;">29</span>
<div style="left:977px;top:432px;width:95px;height:21px;background:#f0f0f0;border-top:1px solid #fff;border-left:1px solid #fff;border-right:1px solid #111;border-bottom:1px solid #111;"></div>
<div style="left:1072px;top:432px;width:68px;height:21px;background:#a6caf0;border-right:1px solid #6f7f92;border-bottom:1px solid #6f7f92;"></div>
<div style="left:1140px;top:432px;width:68px;height:21px;background:#a6caf0;border-right:1px solid #6f7f92;border-bottom:1px solid #6f7f92;"></div>
<div style="left:977px;top:453px;width:95px;height:21px;background:#f0f0f0;border-top:1px solid #fff;border-left:1px solid #fff;border-right:1px solid #111;border-bottom:1px solid #111;"></div>
<div style="left:1072px;top:453px;width:68px;height:21px;background:#a6caf0;border-right:1px solid #6f7f92;border-bottom:1px solid #6f7f92;"></div>
<div style="left:1140px;top:453px;width:68px;height:21px;background:#a6caf0;border-right:1px solid #6f7f92;border-bottom:1px solid #6f7f92;"></div>
<span style="left:1195.00px;top:458.38px;font-size:10.8px;color:#111;">9</span>
<div style="left:973px;top:500px;width:237.5px;height:352.5px;border:1px solid #dcdcdc;"></div>
<div style="left:1193px;top:512px;width:7px;height:1px;background:#bdbdbd;"></div>
<div style="left:982.5px;top:758px;width:1px;height:5px;background:#8a8a8a;"></div>
<span style="left:979.50px;top:776.31px;font-size:11px;color:#000;transform:scaleX(0.9440);">Point Number</span>
<span style="left:1107.40px;top:776.31px;font-size:11px;color:#000;">0</span>
<span style="left:979.50px;top:794.91px;font-size:11px;color:#000;letter-spacing:-0.062px;">Concrete Strain :</span>
<span style="left:1107.40px;top:794.91px;font-size:11px;color:#000;">0</span>
<span style="left:979.50px;top:813.61px;font-size:11px;color:#000;letter-spacing:-0.098px;">Rebar Strain :</span>
<span style="left:1107.40px;top:813.61px;font-size:11px;color:#000;">0</span>
<span style="left:979.50px;top:832.21px;font-size:11px;color:#000;letter-spacing:-0.036px;">Neutral Axis Depth :</span>
<span style="left:1107.40px;top:832.21px;font-size:11px;color:#000;transform:scaleX(0.9322);">0 m</span>
<span style="left:1068.50px;top:776.31px;font-size:11px;color:#000;">:</span>
<div style="left:937px;top:861.5px;width:86px;height:20px;background:#e1e1e1;border:2px solid #0078d7;"></div>
<span style="left:963.50px;top:866.11px;font-size:11px;color:#000;transform:scaleX(1.0378);">Export</span>
<div style="left:1030px;top:861.5px;width:86px;height:20px;background:#e1e1e1;border:1px solid #adadad;"></div>
<span style="left:1056.25px;top:866.11px;font-size:11px;color:#000;letter-spacing:0.078px;">Report</span>
<div style="left:1123px;top:861.5px;width:86px;height:20px;background:#e1e1e1;border:1px solid #adadad;"></div>
<span style="left:1152.75px;top:866.11px;font-size:11px;color:#000;transform:scaleX(0.9422);">Close</span>
<div style="left:733px;top:323px;width:461px;height:435px;background:#f0f0f0;border:1px solid #3c8fd0;box-shadow:2px 6px 14px 0 rgba(0,0,0,.30), 1px 1px 5px rgba(0,0,0,.14);"></div>
<div style="left:734px;top:324px;width:459px;height:26px;background:#fff;"></div>
<span style="left:737.80px;top:330.32px;font-size:12px;color:#000;letter-spacing:-0.137px;">Export M-Φ Result to Pushover Hinge</span>
<svg style="left:1172px;top:330px;" width="12" height="12" viewBox="0 0 12 12"><path d="M1 1L11 11M11 1L1 11" stroke="#111" stroke-width="1.1"/></svg>
<span style="left:754.00px;top:370.41px;font-size:11px;color:#000;transform:scaleX(0.9727);">Name :</span>
<div style="left:809px;top:365px;width:361px;height:22px;background:#fff;border:1px solid #0078d7;"></div>
<div style="left:815px;top:369px;width:1px;height:14px;background:#000;"></div>
<div style="left:746px;top:411.4px;width:254px;height:101.60000000000002px;border:1px solid #dcdcdc;"></div>
<div style="left:752px;top:410.4px;width:86px;height:3px;background:#f0f0f0;"></div>
<span style="left:754.00px;top:406.31px;font-size:11px;color:#000;transform:scaleX(1.0336);">Interaction Type</span>
<div style="left:1009px;top:411.4px;width:169.5px;height:101.60000000000002px;border:1px solid #dcdcdc;"></div>
<div style="left:1015.5px;top:410.4px;width:143.5px;height:3px;background:#f0f0f0;"></div>
<span style="left:1017.50px;top:406.31px;font-size:11px;color:#000;transform:scaleX(0.9540);">Axial Force</span>
<div style="left:746px;top:533px;width:432px;height:180px;border:1px solid #dcdcdc;"></div>
<div style="left:752px;top:532px;width:172px;height:3px;background:#f0f0f0;"></div>
<span style="left:754.00px;top:527.91px;font-size:11px;color:#000;letter-spacing:-0.103px;">Component Properties</span>
<svg style="left:759px;top:431.6px;" width="14" height="14" viewBox="0 0 14 14"><circle cx="7" cy="7" r="6" fill="#fff" stroke="#333" stroke-width="1"/></svg>
<span style="left:775.00px;top:434.31px;font-size:11px;color:#000;transform:scaleX(0.9507);">None</span>
<svg style="left:759px;top:456.6px;" width="14" height="14" viewBox="0 0 14 14"><circle cx="7" cy="7" r="6" fill="#fff" stroke="#333" stroke-width="1"/><circle cx="7" cy="7" r="3.2" fill="#222"/></svg>
<span style="left:775.00px;top:459.31px;font-size:11px;color:#000;transform:scaleX(0.9705);">P-M in Status Determination</span>
<svg style="left:759px;top:481.7px;" width="14" height="14" viewBox="0 0 14 14"><circle cx="7" cy="7" r="6" fill="#fff" stroke="#333" stroke-width="1"/></svg>
<span style="left:775.00px;top:484.31px;font-size:11px;color:#000;transform:scaleX(0.9675);">P-M-M in Status Determination</span>
<svg style="left:1022.3px;top:431.6px;" width="14" height="14" viewBox="0 0 14 14"><circle cx="7" cy="7" r="6" fill="#fff" stroke="#333" stroke-width="1"/><circle cx="7" cy="7" r="3.2" fill="#222"/></svg>
<span style="left:1038.70px;top:434.31px;font-size:11px;color:#000;letter-spacing:0.040px;">Auto</span>
<svg style="left:1022.3px;top:456.6px;" width="14" height="14" viewBox="0 0 14 14"><circle cx="7" cy="7" r="6" fill="#fff" stroke="#333" stroke-width="1"/></svg>
<span style="left:1038.70px;top:459.31px;font-size:11px;color:#000;transform:scaleX(0.9167);">User</span>
<svg style="left:1083px;top:427.5px;" width="24" height="24" viewBox="0 0 24 24"><path d="M12 1.5 L16 6 H13.6 V10.4 H18 V8 L22.5 12 L18 16 V13.6 H13.6 V18 H16 L12 22.5 L8 18 H10.4 V13.6 H6 V16 L1.5 12 L6 8 V10.4 H10.4 V6 H8Z" fill="#fff" stroke="#222" stroke-width="1" stroke-linejoin="miter"/></svg>
<div style="left:1029.3px;top:482px;width:127.7px;height:19.4px;background:#cccccc;border:1px solid #bfbfbf;"></div>
<span style="left:1048.00px;top:486.81px;font-size:11px;color:#838383;transform:scaleX(0.9746);">Define Axial Force</span>
<span style="left:765.40px;top:557.81px;font-size:11px;color:#000;letter-spacing:-0.142px;">Component</span>
<span style="left:875.00px;top:557.81px;font-size:11px;color:#000;transform:scaleX(0.9538);">Hinge Location</span>
<span style="left:1013.20px;top:553.61px;font-size:11px;color:#000;transform:scaleX(0.9705);">Hinge Length Ratio(Lp/L)</span>
<span style="left:1031.00px;top:572.31px;font-size:11px;color:#000;transform:scaleX(1.0527);">I-end</span>
<span style="left:1117.00px;top:572.31px;font-size:11px;color:#000;transform:scaleX(0.9698);">J-end</span>
<div style="left:774.2px;top:591.8px;width:12.5px;height:12.5px;background:#f2f2f2;border:1px solid #c2c2c2;"></div>
<svg style="left:774.2px;top:591.8px;" width="12.5" height="12.5" viewBox="0 0 12.5 12.5"><path d="M2.6 6.4 L5 8.8 L9.8 3.2" fill="none" stroke="#b0b0b0" stroke-width="1.1"/></svg>
<span style="left:789.60px;top:593.51px;font-size:11px;color:#838383;transform:scaleX(0.9133);">My</span>
<div style="left:774.2px;top:619.5px;width:12.5px;height:12.5px;background:#f2f2f2;border:1px solid #c2c2c2;"></div>
<svg style="left:774.2px;top:619.5px;" width="12.5" height="12.5" viewBox="0 0 12.5 12.5"><path d="M2.6 6.4 L5 8.8 L9.8 3.2" fill="none" stroke="#b0b0b0" stroke-width="1.1"/></svg>
<span style="left:789.60px;top:620.71px;font-size:11px;color:#838383;transform:scaleX(0.8792);">Mz</span>
<div style="left:872px;top:590.3px;width:99.5px;height:21.4px;background:#e3e3e3;border:1px solid #adadad;"></div>
<span style="left:875.60px;top:595.91px;font-size:11px;color:#000;letter-spacing:-0.075px;">I&amp;J-end</span>
<svg style="left:957px;top:597px;" width="12" height="8" viewBox="0 0 12 8"><path d="M1.5 1.5L6 6L10.5 1.5" fill="none" stroke="#555" stroke-width="1"/></svg>
<div style="left:872px;top:618.3px;width:99.5px;height:21.2px;background:#cccccc;border:1px solid #bfbfbf;"></div>
<span style="left:875.60px;top:623.61px;font-size:11px;color:#838383;letter-spacing:-0.075px;">I&amp;J-end</span>
<svg style="left:957px;top:625px;" width="12" height="8" viewBox="0 0 12 8"><path d="M1.5 1.5L6 6L10.5 1.5" fill="none" stroke="#a6a6a6" stroke-width="1.1"/></svg>
<div style="left:1012.3px;top:590.3px;width:77px;height:21px;background:#fff;border:1px solid #505050;"></div>
<span style="left:1018.00px;top:595.41px;font-size:11px;color:#000;letter-spacing:0.068px;">0.1</span>
<div style="left:1095.2px;top:590.3px;width:76.5px;height:21px;background:#fff;border:1px solid #505050;"></div>
<span style="left:1101.00px;top:595.41px;font-size:11px;color:#000;letter-spacing:0.068px;">0.1</span>
<div style="left:1012.3px;top:618.8px;width:77px;height:20.5px;background:#f0f0f0;border:1px solid #cfcfcf;"></div>
<span style="left:1018.00px;top:623.61px;font-size:11px;color:#8a8a8a;letter-spacing:0.068px;">0.1</span>
<div style="left:1095.2px;top:618.8px;width:76.5px;height:20.5px;background:#f0f0f0;border:1px solid #cfcfcf;"></div>
<span style="left:1101.00px;top:623.61px;font-size:11px;color:#8a8a8a;letter-spacing:0.068px;">0.1</span>
<span style="left:849.00px;top:659.81px;font-size:11px;color:#000;letter-spacing:-0.108px;">Residual Resistance After Failure (M/My)</span>
<div style="left:1095.2px;top:655px;width:76.5px;height:20.5px;background:#fff;border:1px solid #505050;"></div>
<span style="left:1101.00px;top:659.81px;font-size:11px;color:#000;">0</span>
<span style="left:885.00px;top:688.01px;font-size:11px;color:#000;">Final Curvature After Failure (D/Dy)</span>
<div style="left:1095.2px;top:683px;width:76.5px;height:21px;background:#fff;border:1px solid #505050;"></div>
<span style="left:1101.00px;top:688.01px;font-size:11px;color:#000;transform:scaleX(0.8980);">15</span>
<div style="left:950.3px;top:725.5px;width:68px;height:19.6px;background:#e1e1e1;border:2px solid #0078d7;"></div>
<span style="left:976.50px;top:730.21px;font-size:11px;color:#000;transform:scaleX(0.9430);">OK</span>
<div style="left:1027px;top:725.5px;width:68px;height:19.6px;background:#e1e1e1;border:1px solid #adadad;"></div>
<span style="left:1047.50px;top:730.21px;font-size:11px;color:#000;letter-spacing:-0.106px;">Apply</span>
<div style="left:1104px;top:725.5px;width:68px;height:19.6px;background:#e1e1e1;border:1px solid #adadad;"></div>
<span style="left:1124.75px;top:730.21px;font-size:11px;color:#000;transform:scaleX(0.9422);">Close</span>
</body></html>
